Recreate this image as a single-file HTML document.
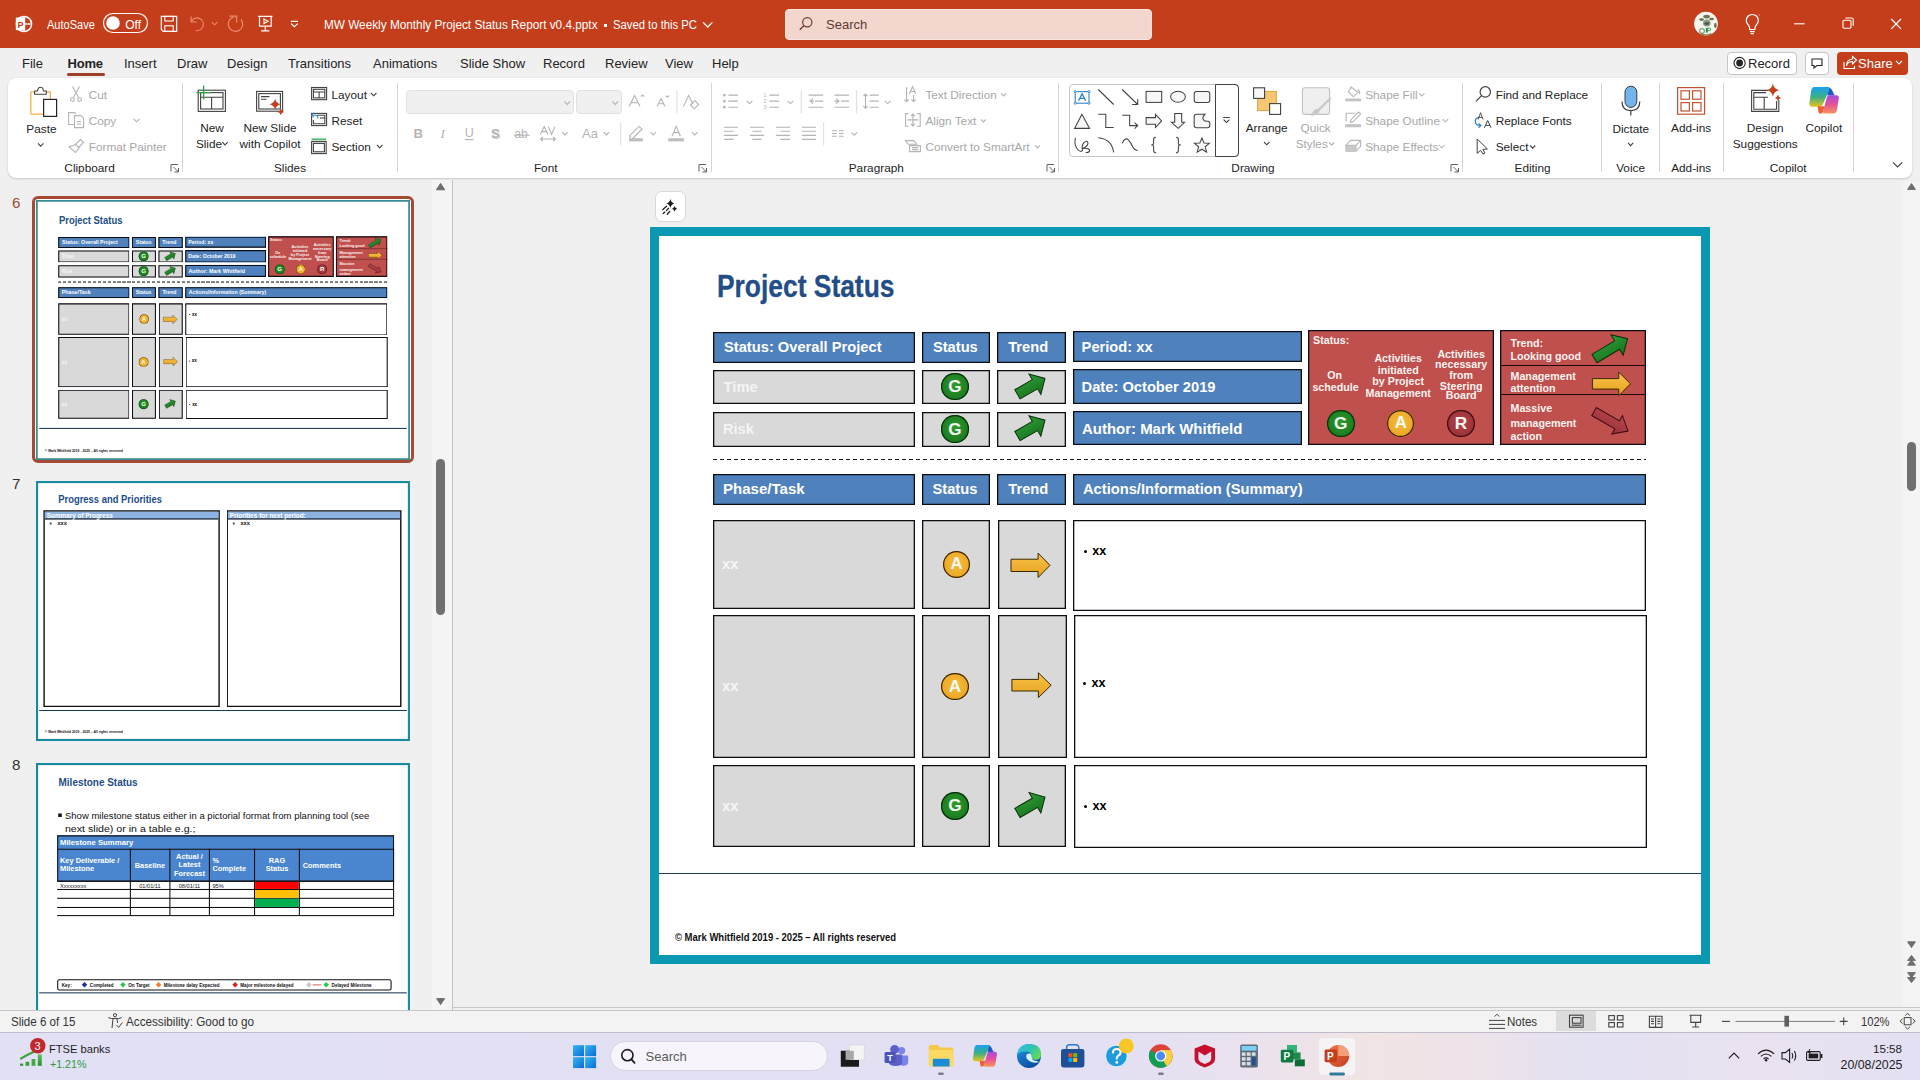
<!DOCTYPE html>
<html><head><meta charset="utf-8"><title>PowerPoint</title>
<style>
*{box-sizing:border-box;margin:0;padding:0}
html,body{width:1920px;height:1080px;overflow:hidden;background:#F0F0F0;font-family:"Liberation Sans",sans-serif;color:#242424}
.a{position:absolute}
.t{position:absolute;white-space:nowrap;line-height:1}
svg{position:absolute;overflow:visible}

</style></head><body>
<!-- TITLE BAR -->
<div class="a" style="left:0;top:0;width:1920px;height:48px;background:#C43E1C"></div>
<svg style="left:0;top:0" width="340" height="48" viewBox="0 0 340 48">
  <!-- PPT logo -->
  <circle cx="24" cy="24" r="7.6" fill="none" stroke="#fff" stroke-width="1.5"/>
  <line x1="24" y1="16.5" x2="24" y2="31.5" stroke="#fff" stroke-width="1.3"/>
  <line x1="24" y1="24" x2="31.5" y2="24" stroke="#fff" stroke-width="1.3"/>
  <rect x="15.8" y="17.6" width="9.4" height="12.6" rx="1" fill="#fff"/>
  <text x="17.6" y="27.6" font-family="Liberation Sans" font-weight="bold" font-size="9" fill="#C43E1C">P</text>
  <!-- toggle -->
  <rect x="103.5" y="13.5" width="44" height="19" rx="9.5" fill="none" stroke="#fff" stroke-width="1.2"/>
  <circle cx="113" cy="23" r="6.8" fill="#fff"/>
  <!-- save -->
  <path d="M161.3 16.4 H176.7 V31.4 H163.2 L161.3 29.5 Z" fill="none" stroke="#fff" stroke-width="1.2"/>
  <rect x="164.8" y="16.4" width="8.4" height="4.6" fill="none" stroke="#fff" stroke-width="1.1"/>
  <rect x="164.8" y="25.8" width="8.4" height="5.6" fill="none" stroke="#fff" stroke-width="1.1"/>
  <!-- undo -->
  <path d="M191.5 21.2 A6.3 6.3 0 1 1 196.5 30.5 L196 31" fill="none" stroke="#EC8A70" stroke-width="1.2"/>
  <path d="M191.2 16.5 V22 H196.5" fill="none" stroke="#EC8A70" stroke-width="1.2"/>
  <path d="M211.8 22.2 L214.6 24.8 L217.4 22.2" fill="none" stroke="#EC8A70" stroke-width="1.1"/>
  <!-- redo -->
  <path d="M241 19.5 A7.2 7.2 0 1 1 233.5 17.2" fill="none" stroke="#EC8A70" stroke-width="1.2"/>
  <path d="M229.5 16.2 H236.6 V22.5" fill="none" stroke="#EC8A70" stroke-width="1.2" transform="rotate(0)"/>
  <!-- present -->
  <path d="M258.2 16.4 H272.5 M259.5 16.4 V26.2 H271.2 V16.4 M265.3 26.2 V30.6 M261.2 30.8 H269.4" fill="none" stroke="#fff" stroke-width="1.2"/>
  <path d="M264 19 L268 21.3 L264 23.6 Z" fill="none" stroke="#fff" stroke-width="1.1"/>
  <!-- customize -->
  <path d="M290.8 21.3 H298 M291 23.6 L294.4 26.8 L297.8 23.6" fill="none" stroke="#fff" stroke-width="1.2"/>
</svg>
<div class="t" style="left:47.2px;top:19.3px;font-size:12px;color:#fff;transform:scaleX(0.92);transform-origin:0 0">AutoSave</div>
<div class="t" style="left:125.2px;top:19.3px;font-size:12px;color:#fff">Off</div>
<div class="t" style="left:324.2px;top:19.3px;font-size:12px;color:#fff;transform:scaleX(0.982);transform-origin:0 0">MW Weekly Monthly Project Status Report v0.4.pptx</div><div class="a" style="left:604px;top:24.3px;width:2.8px;height:2.8px;background:#fff"></div><div class="t" style="left:613.2px;top:19.3px;font-size:12px;color:#fff;transform:scaleX(0.94);transform-origin:0 0">Saved to this PC</div>
<svg style="left:702px;top:19px" width="16" height="12"><path d="M1.2 3.4 L5.8 8 L10.4 3.4" fill="none" stroke="#fff" stroke-width="1.3"/></svg>
<!-- search -->
<div class="a" style="left:784.5px;top:8.5px;width:367px;height:31px;background:#F3D7CF;border:1px solid #F7E6E1;border-radius:4px"></div>
<svg style="left:796px;top:14px" width="20" height="20" viewBox="0 0 20 20"><circle cx="11.3" cy="8.2" r="4.6" fill="none" stroke="#6B3A2E" stroke-width="1.2"/><line x1="8" y1="11.5" x2="3.8" y2="15.8" stroke="#6B3A2E" stroke-width="1.3"/></svg>
<div class="t" style="left:826px;top:18px;font-size:13px;color:#5E3A31">Search</div>
<!-- right -->
<svg style="left:0;top:0" width="1" height="1">
<circle cx="1706" cy="23.7" r="11.9" fill="#F6F4EE"/>
<ellipse cx="1706.6" cy="16.6" rx="3.4" ry="1.8" fill="#6F7550"/>
<ellipse cx="1701.6" cy="19.6" rx="2.4" ry="1.3" fill="#6A7050"/><ellipse cx="1711.6" cy="19" rx="2.4" ry="1.3" fill="#6A7050"/>
<ellipse cx="1706.8" cy="23" rx="3.8" ry="3.6" fill="#8A9A88"/>
<ellipse cx="1706.8" cy="23.6" rx="2.6" ry="1.4" fill="#3F5A48"/>
<ellipse cx="1715.4" cy="25.4" rx="1.3" ry="2.6" fill="#6E7048"/>
<circle cx="1702" cy="31" r="2.4" fill="none" stroke="#7FA08A" stroke-width="1.2"/>
<rect x="1705.8" y="28" width="2" height="4.6" fill="#2B8A45"/><path d="M1707.4 28.2 H1709.4 Q1710.6 28.2 1710.6 29.4 Q1710.6 30.6 1709.4 30.6 H1707.6" fill="none" stroke="#2B8A45" stroke-width="1"/>
<path d="M1700.6 33.6 Q1706 36.6 1711.4 33.6" fill="none" stroke="#8A7A40" stroke-width="1.2"/>
</svg>
<svg style="left:1740px;top:10px" width="26" height="28" viewBox="0 0 26 28"><path d="M12.3 4.5 C8.6 4.5 6.3 7.3 6.3 10.4 C6.3 13 8 14.4 9 16 C9.6 17 9.7 18 9.7 19.5 H14.9 C14.9 18 15 17 15.6 16 C16.6 14.4 18.3 13 18.3 10.4 C18.3 7.3 16 4.5 12.3 4.5 Z" fill="none" stroke="#fff" stroke-width="1.2"/><path d="M9.9 21.6 H14.7 M10.6 23.7 H14" stroke="#fff" stroke-width="1.2"/><circle cx="19" cy="5" r="1.3" fill="#D9584A"/></svg>
<svg style="left:1790px;top:14px" width="120" height="20" viewBox="0 0 120 20">
  <line x1="4" y1="9.8" x2="14.6" y2="9.8" stroke="#fff" stroke-width="1.1"/>
  <rect x="53" y="6.2" width="8" height="8" rx="1.2" fill="none" stroke="#fff" stroke-width="1.1"/>
  <path d="M55.4 4 H61.6 Q63.2 4 63.2 5.6 V11.8" fill="none" stroke="#fff" stroke-width="1.1"/>
  <path d="M101.2 5 L111 14.8 M111 5 L101.2 14.8" stroke="#fff" stroke-width="1.2"/>
</svg>
<!-- TABS -->
<div class="t" style="left:22px;top:57px;font-size:13px;color:#242424">File</div>
<div class="t" style="left:67.5px;top:57px;font-size:13px;color:#242424;font-weight:bold;letter-spacing:-0.2px">Home</div>
<div class="a" style="left:67px;top:73px;width:37.5px;height:3px;border-radius:1.5px;background:#9E3F28"></div>
<div class="t" style="left:124px;top:57px;font-size:13px">Insert</div>
<div class="t" style="left:177px;top:57px;font-size:13px">Draw</div>
<div class="t" style="left:227px;top:57px;font-size:13px">Design</div>
<div class="t" style="left:288px;top:57px;font-size:13px">Transitions</div>
<div class="t" style="left:373px;top:57px;font-size:13px">Animations</div>
<div class="t" style="left:460px;top:57px;font-size:13px">Slide Show</div>
<div class="t" style="left:543px;top:57px;font-size:13px">Record</div>
<div class="t" style="left:605px;top:57px;font-size:13px">Review</div>
<div class="t" style="left:665px;top:57px;font-size:13px">View</div>
<div class="t" style="left:712px;top:57px;font-size:13px">Help</div>
<!-- record / comments / share -->
<div class="a" style="left:1727px;top:51.5px;width:69.5px;height:23px;border:1px solid #C6C6C6;border-radius:4px;background:#fff"></div>
<svg style="left:1732px;top:55px" width="16" height="16"><circle cx="7.6" cy="8" r="5.6" fill="none" stroke="#242424" stroke-width="1.1"/><circle cx="7.6" cy="8" r="3.4" fill="#242424"/></svg>
<div class="t" style="left:1748px;top:57px;font-size:13px">Record</div>
<div class="a" style="left:1805px;top:51.5px;width:24px;height:23px;border:1px solid #C6C6C6;border-radius:4px;background:#fff"></div>
<svg style="left:1809px;top:55px" width="16" height="16"><path d="M3 4 H13 V10.5 H8 L5 13 V10.5 H3 Z" fill="none" stroke="#242424" stroke-width="1.1"/></svg>
<div class="a" style="left:1837px;top:51.5px;width:71px;height:23px;border-radius:4px;background:#C43E1C"></div>
<svg style="left:1841px;top:55px" width="20" height="16"><path d="M3 7 V13.5 H13.5 V11" fill="none" stroke="#fff" stroke-width="1.1"/><path d="M5.5 11 Q6.5 6.5 11.5 6.5 V9 L15.5 5 L11.5 1.5 V4 Q5.5 4.5 5.5 11 Z" fill="none" stroke="#fff" stroke-width="1.1"/></svg>
<div class="t" style="left:1858px;top:57px;font-size:13px;color:#fff">Share</div>
<svg style="left:1894px;top:58px" width="12" height="10"><path d="M2 3 L5 6 L8 3" fill="none" stroke="#fff" stroke-width="1.1"/></svg>
<!-- RIBBON -->
<div class="a" style="left:8px;top:78px;width:1904px;height:100px;background:#fff;border-radius:8px;box-shadow:0 1px 2px rgba(0,0,0,0.16),0 0 1px rgba(0,0,0,0.10)"></div>
<div class="a" style="left:182.0px;top:83px;width:1px;height:89px;background:#D6D6D6"></div>
<div class="a" style="left:397.0px;top:83px;width:1px;height:89px;background:#D6D6D6"></div>
<div class="a" style="left:710.5px;top:83px;width:1px;height:89px;background:#D6D6D6"></div>
<div class="a" style="left:1058.0px;top:83px;width:1px;height:89px;background:#D6D6D6"></div>
<div class="a" style="left:1462.0px;top:83px;width:1px;height:89px;background:#D6D6D6"></div>
<div class="a" style="left:1601.0px;top:83px;width:1px;height:89px;background:#D6D6D6"></div>
<div class="a" style="left:1659.0px;top:83px;width:1px;height:89px;background:#D6D6D6"></div>
<div class="a" style="left:1722.5px;top:83px;width:1px;height:89px;background:#D6D6D6"></div>
<div class="a" style="left:1853.0px;top:83px;width:1px;height:89px;background:#D6D6D6"></div>
<div class="t" style="left:-110.40px;width:400px;text-align:center;top:163.14px;font-size:11.8px;color:#242424;">Clipboard</div>
<div class="t" style="left:90.00px;width:400px;text-align:center;top:163.14px;font-size:11.8px;color:#242424;">Slides</div>
<div class="t" style="left:345.70px;width:400px;text-align:center;top:163.14px;font-size:11.8px;color:#242424;">Font</div>
<div class="t" style="left:676.30px;width:400px;text-align:center;top:163.14px;font-size:11.8px;color:#242424;">Paragraph</div>
<div class="t" style="left:1053.00px;width:400px;text-align:center;top:163.14px;font-size:11.8px;color:#242424;">Drawing</div>
<div class="t" style="left:1332.60px;width:400px;text-align:center;top:163.14px;font-size:11.8px;color:#242424;">Editing</div>
<div class="t" style="left:1430.60px;width:400px;text-align:center;top:163.14px;font-size:11.8px;color:#242424;">Voice</div>
<div class="t" style="left:1491.20px;width:400px;text-align:center;top:163.14px;font-size:11.8px;color:#242424;">Add-ins</div>
<div class="t" style="left:1588.20px;width:400px;text-align:center;top:163.14px;font-size:11.8px;color:#242424;">Copilot</div>
<svg style="left:0;top:0" width="1" height="1"><path d="M171 171.5 V164.5 H178" fill="none" stroke="#616161" stroke-width="1"/><path d="M173.5 167.0 L178.5 172.0 M174.5 172.0 H178.5 V168.0" fill="none" stroke="#616161" stroke-width="1"/></svg>
<svg style="left:0;top:0" width="1" height="1"><path d="M699 171.5 V164.5 H706" fill="none" stroke="#616161" stroke-width="1"/><path d="M701.5 167.0 L706.5 172.0 M702.5 172.0 H706.5 V168.0" fill="none" stroke="#616161" stroke-width="1"/></svg>
<svg style="left:0;top:0" width="1" height="1"><path d="M1047 171.5 V164.5 H1054" fill="none" stroke="#616161" stroke-width="1"/><path d="M1049.5 167.0 L1054.5 172.0 M1050.5 172.0 H1054.5 V168.0" fill="none" stroke="#616161" stroke-width="1"/></svg>
<svg style="left:0;top:0" width="1" height="1"><path d="M1451 171.5 V164.5 H1458" fill="none" stroke="#616161" stroke-width="1"/><path d="M1453.5 167.0 L1458.5 172.0 M1454.5 172.0 H1458.5 V168.0" fill="none" stroke="#616161" stroke-width="1"/></svg>
<div class="t" style="left:-158.60px;width:400px;text-align:center;top:123.94px;font-size:11.8px;color:#242424;">Paste</div>
<svg style="left:0;top:0" width="1" height="1"><path d="M38 143.3 L40.7 146.10000000000002 L43.4 143.3" fill="none" stroke="#424242" stroke-width="1.1"/></svg>
<svg style="left:0;top:0" width="1" height="1">
<path d="M30.8 91.8 H50.4 V99 M43 114.2 H30.8 Z" fill="#F9F9F9" stroke="#F2B24B" stroke-width="1.3"/>
<path d="M30.8 91.8 V114.2" stroke="#F2B24B" stroke-width="1.3"/>
<path d="M34.6 94.2 V91 H37.5 Q38 87.2 40.5 87.2 Q43 87.2 43.5 91 H46.3 V94.2 Z" fill="#fff" stroke="#424242" stroke-width="1.1"/>
<rect x="43.6" y="99.4" width="13" height="17" fill="#fff" stroke="#242424" stroke-width="1.2"/>
</svg>
<div class="t" style="left:88.70px;top:89.94px;font-size:11.8px;color:#A8A8A8;">Cut</div>
<div class="t" style="left:88.70px;top:115.74px;font-size:11.8px;color:#A8A8A8;">Copy</div>
<svg style="left:0;top:0" width="1" height="1"><path d="M133.8 119 L136.60000000000002 121.8 L139.4 119" fill="none" stroke="#B4B4B4" stroke-width="1.1"/></svg>
<div class="t" style="left:88.70px;top:141.74px;font-size:11.8px;color:#A8A8A8;">Format Painter</div>
<svg style="left:0;top:0" width="1" height="1">
<g fill="none" stroke="#B4B4B4" stroke-width="1.1">
<path d="M72.5 86.5 L78.6 97.5 M79.5 86.5 L73.4 97.5"/><circle cx="72.4" cy="99.6" r="1.9"/><circle cx="79.6" cy="99.6" r="1.9"/>
<path d="M74 124.5 H68.6 V112.6 H74.6 L76 114"/><path d="M74.5 115.6 H81 L83.6 118.2 V127.6 H74.5 Z"/><path d="M76.8 121.5 H81 M76.8 124 H81"/>
<path d="M80.5 139.5 L83.6 142.5 L78.6 147.5 L75.5 144.5 Z"/><path d="M75.5 144.5 L69 147 L75.6 152.5 L79.5 147.2"/>
</g></svg>
<div class="t" style="left:12.00px;width:400px;text-align:center;top:123.04px;font-size:11.8px;color:#242424;">New</div>
<div class="t" style="left:9.00px;width:400px;text-align:center;top:138.84px;font-size:11.8px;color:#242424;">Slide</div>
<svg style="left:0;top:0" width="1" height="1"><path d="M222.3 142.2 L225.0 145.0 L227.70000000000002 142.2" fill="none" stroke="#424242" stroke-width="1.1"/></svg>
<div class="t" style="left:70.00px;width:400px;text-align:center;top:123.04px;font-size:11.8px;color:#242424;">New Slide</div>
<div class="t" style="left:70.00px;width:400px;text-align:center;top:138.84px;font-size:11.8px;color:#242424;">with Copilot</div>
<div class="t" style="left:331.50px;top:90.04px;font-size:11.8px;color:#242424;">Layout</div>
<svg style="left:0;top:0" width="1" height="1"><path d="M371 93 L373.7 95.8 L376.4 93" fill="none" stroke="#424242" stroke-width="1.1"/></svg>
<div class="t" style="left:331.50px;top:115.84px;font-size:11.8px;color:#242424;">Reset</div>
<div class="t" style="left:331.50px;top:141.84px;font-size:11.8px;color:#242424;">Section</div>
<svg style="left:0;top:0" width="1" height="1"><path d="M377 145 L379.7 147.8 L382.4 145" fill="none" stroke="#424242" stroke-width="1.1"/></svg>
<svg style="left:0;top:0" width="1" height="1">
<g fill="none" stroke="#424242" stroke-width="1.1">
<rect x="198.2" y="90.2" width="27.2" height="21.2"/><rect x="200.6" y="92.6" width="22.4" height="16.4"/>
<path d="M200.6 97.3 H223 M211.6 97.3 V109"/>
</g>
<path d="M203.6 85.5 V99.6 M196.5 92.6 H210.7" stroke="#2E9E45" stroke-width="1.3"/>
<g fill="none" stroke="#424242" stroke-width="1.1">
<rect x="256.6" y="91.4" width="26" height="19.8"/><rect x="258.8" y="93.6" width="21.6" height="15.4"/>
<path d="M261 96.6 H269.5 M261 99.2 H266.5"/>
</g>
<path d="M275.1 98.6 Q276 103.4 280.6 104.3 Q276 105.2 275.1 110 Q274.2 105.2 269.6 104.3 Q274.2 103.4 275.1 98.6 Z" fill="#C43E1C"/>
<path d="M280.8 108.6 Q281.3 111.4 284 111.9 Q281.3 112.4 280.8 115.2 Q280.3 112.4 277.6 111.9 Q280.3 111.4 280.8 108.6 Z" fill="#C43E1C"/>
<g fill="none" stroke="#424242" stroke-width="1.1">
<rect x="311.6" y="87.5" width="15" height="12.2"/><rect x="313.4" y="89.3" width="11.4" height="8.6"/><path d="M313.4 92 H324.8 M319.1 92 V97.9"/>
<rect x="311.6" y="113.4" width="15" height="12.2"/><path d="M317 115.2 H324.8 V123.8 H313.4 V120"/><path d="M320 118 H324.8"/>
<rect x="311.6" y="141.6" width="14.6" height="12"/><rect x="313.4" y="143.4" width="11" height="8.4"/>
</g>
<path d="M318 118.5 Q318 115 314.5 115 H312" fill="none" stroke="#3A87C9" stroke-width="1.1"/><path d="M314 112.8 L311.6 115 L314 117.2" fill="none" stroke="#3A87C9" stroke-width="1.1"/>
<rect x="311.6" y="138.4" width="14.6" height="2" fill="#5DB56F"/>
</svg>
<div class="a" style="left:406.2px;top:90px;width:167.4px;height:23.5px;background:#F0F0F0;border:1px solid #E2E2E2;border-radius:4px"></div>
<div class="a" style="left:576.4px;top:90px;width:45.4px;height:23.5px;background:#F0F0F0;border:1px solid #E2E2E2;border-radius:4px"></div>
<svg style="left:0;top:0" width="1" height="1"><path d="M564.2 101.4 L567.2 104.4 L570.2 101.4" fill="none" stroke="#B4B4B4" stroke-width="1.1"/></svg>
<svg style="left:0;top:0" width="1" height="1"><path d="M612.2 101.4 L615.2 104.4 L618.2 101.4" fill="none" stroke="#B4B4B4" stroke-width="1.1"/></svg>
<svg style="left:0;top:0" width="1" height="1">
<g fill="none" stroke="#B4B4B4" stroke-width="1.1">
<path d="M629.2 106.6 L634.6 95.6 L640 106.6 M631 102.8 H638.2"/><path d="M641 96.6 L642.6 95 L644.2 96.6"/>
<path d="M657 106.6 L661 98.6 L665 106.6 M658.4 103.8 H663.6"/><path d="M665.6 95.6 L667.4 97.2 L669.2 95.6"/>
<path d="M683.5 106.6 L688.5 95.4 L693 104"/><path d="M690.5 105 L694.8 100.6 L698.6 104.4 L694.3 108.8 Z"/>
<path d="M677 90.4 V113.2" stroke="#E0E0E0"/>
<path d="M620.7 122.4 V145.4" stroke="#E0E0E0"/>
<path d="M540.4 134.3 L544.2 126.6 L548 134.3 M541.8 131.6 H546.6 M548.2 126.6 L551.6 134.3 L555 126.6"/>
<path d="M540.6 139 H555.4 M542.8 137 L540.6 139 L542.8 141 M553.2 137 L555.4 139 L553.2 141"/>
<path d="M464.8 139.6 H473.6"/>
<path d="M514 135.2 H529.6"/>
<path d="M629.2 136.2 L639.2 126.4 L642 129.2 L632 139"/><path d="M629 138.2 L631 136.2"/>
<path d="M672 136.2 L676.2 126.4 L680.4 136.2 M673.6 132.6 H678.8"/>
</g>
<rect x="629" y="138.2" width="13.8" height="3.2" fill="#BDBDBD"/>
<rect x="668.3" y="138.2" width="15.5" height="3.2" fill="#BDBDBD"/>
</svg>
<div class="t" style="left:413.6px;top:126.9px;font-size:13px;font-weight:bold;color:#B4B4B4">B</div>
<div class="t" style="left:440.6px;top:126.9px;font-size:13px;font-style:italic;color:#B4B4B4;font-family:'Liberation Serif',serif">I</div>
<div class="t" style="left:464.8px;top:126.9px;font-size:12.5px;color:#B4B4B4">U</div>
<div class="t" style="left:491px;top:126.9px;font-size:13px;font-weight:bold;color:#B4B4B4;text-shadow:1px 1px 1px #D0D0D0">S</div>
<div class="t" style="left:514.4px;top:128.4px;font-size:12px;color:#B4B4B4">ab</div>
<div class="t" style="left:582px;top:127.2px;font-size:13px;color:#B4B4B4">Aa</div>
<svg style="left:0;top:0" width="1" height="1"><path d="M562 132.2 L564.8 135.0 L567.6 132.2" fill="none" stroke="#B4B4B4" stroke-width="1.1"/></svg>
<svg style="left:0;top:0" width="1" height="1"><path d="M603.6 132.2 L606.4 135.0 L609.2 132.2" fill="none" stroke="#B4B4B4" stroke-width="1.1"/></svg>
<svg style="left:0;top:0" width="1" height="1"><path d="M650.4 132.2 L653.1999999999999 135.0 L656.0 132.2" fill="none" stroke="#B4B4B4" stroke-width="1.1"/></svg>
<svg style="left:0;top:0" width="1" height="1"><path d="M692 132.2 L694.8 135.0 L697.6 132.2" fill="none" stroke="#B4B4B4" stroke-width="1.1"/></svg>
<svg style="left:0;top:0" width="1" height="1">
<g fill="#B4B4B4">
<rect x="723.2" y="94" width="2.4" height="2.4"/><rect x="723.2" y="100" width="2.4" height="2.4"/><rect x="723.2" y="106" width="2.4" height="2.4"/>
</g>
<g fill="none" stroke="#B4B4B4" stroke-width="1.1">
<path d="M728.4 95.1 H738 M728.4 101.1 H738 M728.4 107.2 H738"/>
<path d="M769.4 95.1 H779 M769.4 101.1 H779 M769.4 107.2 H779"/>
<path d="M808.6 95.1 H823.2 M815 101.1 H823.2 M808.6 107.2 H823.2 M813 98.6 L810 101.1 L813 103.6 M810 101.1 H814"/>
<path d="M834.5 95.1 H849 M841 101.1 H849 M834.5 107.2 H849 M836 98.6 L839 101.1 L836 103.6 M834.5 101.1 H839"/>
<path d="M869.7 95.1 H878.8 M869.7 101.1 H878.8 M869.7 107.2 H878.8 M865.5 94 V108.4 M863.4 96.2 L865.5 94 L867.6 96.2 M863.4 106.2 L865.5 108.4 L867.6 106.2"/>
<path d="M801.3 90.2 V113.4 M856.6 90.2 V113.4 M823.6 122.1 V145.8" stroke="#E0E0E0"/>
<path d="M723.8 127.2 H737.9 M723.8 131.2 H733.5 M723.8 135.4 H737.9 M723.8 139.4 H733.5"/>
<path d="M749.9 127.2 H764 M752.4 131.2 H761.5 M749.9 135.4 H764 M752.4 139.4 H761.5"/>
<path d="M775.8 127.2 H790 M780.4 131.2 H790 M775.8 135.4 H790 M780.4 139.4 H790"/>
<path d="M801.9 127.2 H815.9 M801.9 131.2 H815.9 M801.9 135.4 H815.9 M801.9 139.4 H815.9"/>
<path d="M832 130.8 H836.6 M839 130.8 H843.6 M832 133.5 H836.6 M839 133.5 H843.6 M832 136.2 H836.6 M839 136.2 H843.6"/>
<path d="M906.6 87 V101.6 M904.4 99.4 L906.6 101.6 L908.8 99.4 M913.6 95 V101.6 M911.4 99.4 L913.6 101.6 L915.8 99.4"/>
<path d="M909.4 94 L912.6 86.6 L915.8 94 M910.5 91.5 H914.7"/>
<path d="M908.6 113.6 H905.6 V126.2 H908.6 M917.2 113.6 H920.2 V126.2 H917.2 M912.9 114 V126 M910.8 116.2 L912.9 114 L915 116.2 M910.8 123.8 L912.9 126 L915 123.8 M907.5 119.9 H918.5"/>
<path d="M905.6 140.6 H914 L916.6 144.2 H908.2 Z M909.6 145.6 H920.4 V151.6 H909.6 Z M912 147.6 H918.4 M912 149.6 H918.4"/>
</g></svg>
<svg style="left:0;top:0" width="1" height="1"><path d="M746.6 100.8 L749.5 103.6 L752.4 100.8" fill="none" stroke="#B4B4B4" stroke-width="1.1"/></svg>
<svg style="left:0;top:0" width="1" height="1"><path d="M787.6 100.8 L790.5 103.6 L793.4 100.8" fill="none" stroke="#B4B4B4" stroke-width="1.1"/></svg>
<svg style="left:0;top:0" width="1" height="1"><path d="M884.8 100.8 L887.6999999999999 103.6 L890.5999999999999 100.8" fill="none" stroke="#B4B4B4" stroke-width="1.1"/></svg>
<svg style="left:0;top:0" width="1" height="1"><path d="M851.4 132.4 L854.3 135.20000000000002 L857.1999999999999 132.4" fill="none" stroke="#B4B4B4" stroke-width="1.1"/></svg>
<div class="t" style="left:763.6px;top:92.2px;font-size:5.5px;line-height:6px;color:#B4B4B4;white-space:pre">1
2
3</div>
<div class="t" style="left:925.40px;top:89.94px;font-size:11.8px;color:#A8A8A8;">Text Direction</div>
<svg style="left:0;top:0" width="1" height="1"><path d="M1001 93.4 L1003.5 96.0 L1006 93.4" fill="none" stroke="#B4B4B4" stroke-width="1.1"/></svg>
<div class="t" style="left:925.40px;top:116.04px;font-size:11.8px;color:#A8A8A8;">Align Text</div>
<svg style="left:0;top:0" width="1" height="1"><path d="M981 119.4 L983.5 122.0 L986 119.4" fill="none" stroke="#B4B4B4" stroke-width="1.1"/></svg>
<div class="t" style="left:925.40px;top:142.04px;font-size:11.8px;color:#A8A8A8;">Convert to SmartArt</div>
<svg style="left:0;top:0" width="1" height="1"><path d="M1035 145.4 L1037.5 148.0 L1040 145.4" fill="none" stroke="#B4B4B4" stroke-width="1.1"/></svg>
<div class="a" style="left:1068.6px;top:84.3px;width:170.4px;height:73.2px;border:1px solid #C6C6C6;border-radius:4px"></div>
<div class="a" style="left:1215px;top:84.3px;width:24px;height:73.2px;border:1px solid #424242;border-radius:0 4px 4px 0"></div>
<svg style="left:0;top:0" width="1" height="1">
<g fill="none" stroke="#424242" stroke-width="1.05">
<path d="M1098.3 89.5 L1113.7 104.5"/>
<path d="M1122.2 89.5 L1137.7 104.5 M1137.7 99 V104.5 H1132.2"/>
<rect x="1146.1" y="91.4" width="15.6" height="11" fill="#F7F7F7"/>
<ellipse cx="1178" cy="96.8" rx="7.4" ry="5.5" fill="#F7F7F7"/>
<rect x="1194.2" y="91.4" width="15.6" height="11" rx="2.4" fill="#F7F7F7"/>
<path d="M1081.9 114.3 L1074.6 128.4 H1089.6 Z" fill="#F7F7F7"/>
<path d="M1098.3 114.3 H1105.8 V127.5 H1113.7"/>
<path d="M1122.2 115.3 H1129.7 V125.6 H1137.7 M1134.6 122.6 L1137.7 125.6 L1134.6 128.6"/>
<path d="M1146.1 117.6 H1155.5 V114.3 L1161.6 120.9 L1155.5 127.5 V124.2 H1146.1 Z" fill="#F7F7F7"/>
<path d="M1174.7 113.4 H1181.7 V122.3 H1184.5 L1178.2 128.4 L1171.4 122.3 H1174.7 Z" fill="#F7F7F7"/>
<path d="M1196.6 114.3 H1205 Q1202.2 116.6 1203 119 Q1204 121.6 1207.6 121.2 Q1209.8 121.2 1209.8 123.4 V125.6 Q1209.8 127.7 1207.6 127.7 H1196.4 Q1194.2 127.7 1194.2 125.5 V116.5 Q1194.2 114.3 1196.6 114.3 Z" fill="#F7F7F7"/>
<path d="M1075.4 137.8 Q1073.6 146 1078.6 150.4 Q1082 152.6 1082.6 149.8 Q1081 146 1084 142.6 Q1087.6 139.4 1088 143.4 Q1087.6 147 1081.6 148.6 Q1088.6 147.6 1089.6 150.2 Q1089.8 152.4 1085.6 152.8"/>
<path d="M1098.3 137.8 Q1111.6 139 1113.7 152.3"/>
<path d="M1122.2 143.4 Q1124.8 136.8 1128.4 139.8 Q1131 142.6 1133 147.4 Q1135.2 150.8 1137.7 150.4"/>
<path d="M1155.9 137.3 Q1153.6 137.3 1153.6 140 V143.6 Q1153.6 145 1151.2 145 Q1153.6 145 1153.6 146.6 V150.2 Q1153.6 152.8 1155.9 152.8"/>
<path d="M1176.1 137.3 Q1178.4 137.3 1178.4 140 V143.6 Q1178.4 145 1180.8 145 Q1178.4 145 1178.4 146.6 V150.2 Q1178.4 152.8 1176.1 152.8"/>
<path d="M1201.9 138 L1204 143 L1209.4 143.3 L1205.2 146.8 L1206.6 152.2 L1201.9 149.2 L1197.2 152.2 L1198.6 146.8 L1194.4 143.3 L1199.8 143 Z" fill="#F7F7F7"/>
<path d="M1223.2 117.4 H1229.8 M1223.6 119.6 L1226.5 122.4 L1229.4 119.6"/>
</g>
<g fill="none" stroke="#2F86C6" stroke-width="1.1">
<rect x="1075.2" y="91.6" width="13.8" height="11.6"/>
</g>
<g fill="#fff" stroke="#2F86C6" stroke-width="0.9">
<circle cx="1075.2" cy="91.6" r="1.1"/><circle cx="1089" cy="91.6" r="1.1"/><circle cx="1075.2" cy="103.2" r="1.1"/><circle cx="1089" cy="103.2" r="1.1"/>
</g>
<path d="M1078.6 100.8 L1082.1 93.8 L1085.6 100.8 M1079.8 98.4 H1084.4" fill="none" stroke="#2F86C6" stroke-width="1.4"/>
<!-- arrange -->
<rect x="1257.6" y="91.4" width="18.8" height="19.2" fill="#F6C770" stroke="#E0A443" stroke-width="1"/>
<rect x="1253.6" y="87.8" width="11" height="10.6" fill="#F7F7F7" stroke="#424242" stroke-width="1.1"/>
<rect x="1269.6" y="103.6" width="11" height="10.8" fill="#fff" stroke="#424242" stroke-width="1.1"/>
<!-- quick styles -->
<rect x="1302.4" y="87.8" width="27.2" height="26.6" rx="2.4" fill="#EFEFEF" stroke="#C2C2C2" stroke-width="1.1"/>
<path d="M1330.6 98 L1318 110.6" stroke="#C8C8C8" stroke-width="2.2"/>
<path d="M1317.2 108.8 Q1313 109.6 1311 116 Q1317 115.4 1319.6 111.4 Z" fill="#C8C8C8"/>
<!-- shape fill -->
<g fill="none" stroke="#B8B8B8" stroke-width="1.1">
<path d="M1351.6 87.2 L1348.2 91.6 L1353.4 96.8 L1358 92.4 Z M1350.8 88.6 V86.4 M1357.6 89.6 Q1360 90.6 1359.6 94"/>
<path d="M1346.2 121.6 V113.2 H1355 M1351 119.6 L1358.6 112 L1360.6 114 L1353 121.6 L1350.6 122.4 Z"/>
<path d="M1345.8 145.4 L1350.6 140.4 H1360.6 V146.4 L1356 151.2 H1346 Z M1345.8 145.4 H1356 L1360.6 140.4 M1356 145.4 V151.2"/>
</g>
<rect x="1345.2" y="98.5" width="15.8" height="2.9" fill="#C4C4C4"/>
<rect x="1345.2" y="124.2" width="15.8" height="3.1" fill="#C4C4C4"/>
<path d="M1346 145.6 H1356 V151.2 H1346 Z" fill="#C8C8C8"/>
<!-- find -->
<g fill="none" stroke="#424242" stroke-width="1.2">
<circle cx="1485.3" cy="91.9" r="5.2"/><path d="M1481.6 95.7 L1476 101.3"/>
<path d="M1477.2 139 V153.4 L1480.6 150.4 L1483 154 L1485 153 L1482.8 149.4 L1487.4 149 Z" stroke-width="1"/>
</g>
<path d="M1478.8 117.2 Q1474.6 118.4 1475.4 122.4 Q1476 125.6 1480.6 125.6" fill="none" stroke="#2F86C6" stroke-width="1.2"/>
<path d="M1478.6 123.4 L1481 125.6 L1478.6 127.8" fill="none" stroke="#2F86C6" stroke-width="1.2"/>
<path d="M1478.2 119.5 L1480.6 112.7 L1483 119.5 M1478.9 117.4 H1482.3" fill="none" stroke="#424242" stroke-width="0.9"/>
<path d="M1484.4 127.8 L1487.7 120.5 L1491 127.8 M1485.4 125.4 H1490" fill="none" stroke="#424242" stroke-width="1"/>
<!-- mic -->
<rect x="1625" y="86.2" width="11.8" height="21.2" rx="5.9" fill="#72B4EE" stroke="#3C3C3C" stroke-width="1"/>
<path d="M1622 101.6 Q1622 110.6 1630.8 110.6 Q1639.8 110.6 1639.8 101.6 M1630.8 110.6 V115.6" fill="none" stroke="#3C3C3C" stroke-width="1.2"/>
<!-- add-ins -->
<g fill="none" stroke="#C2542F" stroke-width="1.2">
<rect x="1677.6" y="87.6" width="27" height="26.6"/>
<rect x="1681" y="90.8" width="8.4" height="8.4"/><rect x="1692.6" y="90.8" width="8.4" height="8.4"/>
<rect x="1681" y="102.6" width="8.4" height="8.4"/><rect x="1692.6" y="102.6" width="8.4" height="8.4"/>
</g>
<!-- design suggestions -->
<g fill="none" stroke="#424242" stroke-width="1.1">
<path d="M1768 90.4 H1751.6 V111.4 H1778.8 V100"/><path d="M1766 92.6 H1753.8 V109.2 H1776.6 V101 M1753.8 97.3 H1768 M1764.2 97.3 V109.2"/>
</g>
<path d="M1772.9 83.6 Q1773.8 89.3 1779.2 90.2 Q1773.8 91.1 1772.9 96.8 Q1772 91.1 1766.6 90.2 Q1772 89.3 1772.9 83.6 Z" fill="#C43E1C"/>
<path d="M1778 94.6 Q1778.5 97.4 1781.2 97.9 Q1778.5 98.4 1778 101.2 Q1777.5 98.4 1774.8 97.9 Q1777.5 97.4 1778 94.6 Z" fill="#C43E1C"/>
<!-- collapse -->
<path d="M1893 162.4 L1897.6 167 L1902.2 162.4" fill="none" stroke="#424242" stroke-width="1.2"/>
<!-- copilot logo -->
<defs>
<linearGradient id="cpa" x1="0" y1="0" x2="1" y2="1"><stop offset="0" stop-color="#2B7DE9"/><stop offset="0.45" stop-color="#26B4A5"/><stop offset="1" stop-color="#F5C12E"/></linearGradient>
<linearGradient id="cpb" x1="0" y1="0" x2="1" y2="1"><stop offset="0" stop-color="#3D56E8"/><stop offset="0.5" stop-color="#C357E0"/><stop offset="1" stop-color="#F2645A"/></linearGradient>
</defs>
<defs>
<linearGradient id="cpl" x1="0" y1="0" x2="0" y2="1"><stop offset="0" stop-color="#17A2F2"/><stop offset="0.5" stop-color="#3BAF86"/><stop offset="1" stop-color="#E6C417"/></linearGradient>
<linearGradient id="cpr" x1="0" y1="0" x2="0" y2="1"><stop offset="0" stop-color="#A64BDF"/><stop offset="0.5" stop-color="#E65199"/><stop offset="1" stop-color="#F9955A"/></linearGradient>
</defs>
<path d="M1826 87 Q1830.6 87 1832 90 L1834.6 95.6 H1827.6 Z" fill="#2456CC"/>
<path d="M1814.2 87 H1827.6 Q1830.2 87 1829.4 89.6 L1822.8 104.6 Q1821.8 106.8 1819.2 106.8 H1812.2 Q1809.2 106.8 1809.4 103.6 L1811 91.6 Q1811.8 87 1814.2 87 Z" fill="url(#cpl)"/>
<path d="M1817.6 106.2 H1824.8 L1823 111.6 Q1822.2 113.8 1820.6 113.8 Q1818.8 113.8 1818.4 111.6 Z" fill="#EE5F35"/>
<path d="M1829 95.2 H1836 Q1839.2 95.2 1838.8 98.6 L1837 109.6 Q1836.4 113.6 1833.4 113.6 H1824.4 Q1822.2 113.6 1823 111.4 L1826.8 97.6 Q1827.4 95.2 1829 95.2 Z" fill="url(#cpr)"/>
</svg>
<div class="t" style="left:1066.70px;width:400px;text-align:center;top:122.64px;font-size:11.8px;color:#242424;">Arrange</div>
<svg style="left:0;top:0" width="1" height="1"><path d="M1264 142 L1266.7 144.8 L1269.4 142" fill="none" stroke="#424242" stroke-width="1.1"/></svg>
<div class="t" style="left:1115.70px;width:400px;text-align:center;top:122.94px;font-size:11.8px;color:#A8A8A8;">Quick</div>
<div class="t" style="left:1295.70px;top:138.64px;font-size:11.8px;color:#A8A8A8;">Styles</div>
<svg style="left:0;top:0" width="1" height="1"><path d="M1329.2 142.5 L1331.7 145.1 L1334.2 142.5" fill="none" stroke="#B4B4B4" stroke-width="1.1"/></svg>
<div class="t" style="left:1365.20px;top:90.04px;font-size:11.8px;color:#A8A8A8;">Shape Fill</div>
<svg style="left:0;top:0" width="1" height="1"><path d="M1419 93.4 L1421.75 96.0 L1424.5 93.4" fill="none" stroke="#B4B4B4" stroke-width="1.1"/></svg>
<div class="t" style="left:1365.20px;top:115.74px;font-size:11.8px;color:#A8A8A8;">Shape Outline</div>
<svg style="left:0;top:0" width="1" height="1"><path d="M1442.7 119.2 L1445.45 121.8 L1448.2 119.2" fill="none" stroke="#B4B4B4" stroke-width="1.1"/></svg>
<div class="t" style="left:1365.20px;top:141.84px;font-size:11.8px;color:#A8A8A8;">Shape Effects</div>
<svg style="left:0;top:0" width="1" height="1"><path d="M1438.9 145.2 L1441.65 147.79999999999998 L1444.4 145.2" fill="none" stroke="#B4B4B4" stroke-width="1.1"/></svg>
<div class="t" style="left:1495.70px;top:89.94px;font-size:11.8px;color:#242424;">Find and Replace</div>
<div class="t" style="left:1495.70px;top:115.64px;font-size:11.8px;color:#242424;">Replace Fonts</div>
<div class="t" style="left:1495.70px;top:141.74px;font-size:11.8px;color:#242424;">Select</div>
<svg style="left:0;top:0" width="1" height="1"><path d="M1530.1 145.5 L1532.6999999999998 148.1 L1535.3 145.5" fill="none" stroke="#424242" stroke-width="1.1"/></svg>
<div class="t" style="left:1430.80px;width:400px;text-align:center;top:123.89px;font-size:11.8px;color:#242424;">Dictate</div>
<svg style="left:0;top:0" width="1" height="1"><path d="M1628 142.9 L1630.6 145.70000000000002 L1633.2 142.9" fill="none" stroke="#424242" stroke-width="1.1"/></svg>
<div class="t" style="left:1491.10px;width:400px;text-align:center;top:122.94px;font-size:11.8px;color:#242424;">Add-ins</div>
<div class="t" style="left:1565.20px;width:400px;text-align:center;top:122.94px;font-size:11.8px;color:#242424;">Design</div>
<div class="t" style="left:1565.20px;width:400px;text-align:center;top:138.84px;font-size:11.8px;color:#242424;">Suggestions</div>
<div class="t" style="left:1623.90px;width:400px;text-align:center;top:122.94px;font-size:11.8px;color:#242424;">Copilot</div>
<!-- LEFT PANEL -->
<div class="a" style="left:432px;top:180px;width:20px;height:830px;background:#F4F4F4"></div>
<div class="a" style="left:452px;top:180px;width:1px;height:830px;background:#C4C4C4"></div>
<svg style="left:0;top:0" width="1" height="1">
<path d="M440.6 183.4 L444.8 189.8 H436.4 Z" fill="#6E6E6E" stroke="#6E6E6E" stroke-width="1" stroke-linejoin="round"/>
<path d="M440.6 1004.6 L444.6 998.6 H436.6 Z" fill="#6E6E6E" stroke="#6E6E6E" stroke-width="1" stroke-linejoin="round"/>
</svg>
<div class="a" style="left:436.1px;top:459px;width:8.8px;height:155.7px;border-radius:4.4px;background:#707070"></div>
<div class="t" style="left:12px;top:195.2px;font-size:15.2px;color:#A54A33">6</div>
<div class="t" style="left:12px;top:476.4px;font-size:15.2px;color:#333">7</div>
<div class="t" style="left:12px;top:757.4px;font-size:15.2px;color:#333">8</div>
<!-- MAIN AREA -->
<div class="a" style="left:1903px;top:181px;width:17px;height:826px;background:#F4F4F4"></div>
<svg style="left:0;top:0" width="1" height="1">
<g fill="#6E6E6E" stroke="#6E6E6E" stroke-width="1" stroke-linejoin="round">
<path d="M1911.5 183.6 L1915.4 189.4 H1907.6 Z"/>
<path d="M1911.5 947.6 L1915.4 941.8 H1907.6 Z"/>
<path d="M1911.5 955.4 L1915.4 960.4 H1907.6 Z"/><path d="M1911.5 960 L1915.4 965.2 H1907.6 Z"/>
<path d="M1911.5 982.6 L1915.4 977.6 H1907.6 Z"/><path d="M1911.5 977.8 L1915.4 972.6 H1907.6 Z"/>
</g></svg>
<div class="a" style="left:1907.1px;top:442px;width:8.8px;height:48.8px;border-radius:4.4px;background:#707070"></div>
<div class="a" style="left:453px;top:1007px;width:1467px;height:1px;background:#C8C8C8"></div>
<!-- magic button -->
<div class="a" style="left:654.6px;top:191.4px;width:31px;height:31.1px;background:#FFFFFF;border:1px solid #D8D8D8;border-radius:7px"></div>
<svg style="left:0;top:0" width="1" height="1">
<path d="M670.4 198.9 Q671.2 202.6 674.6 203.4 Q671.2 204.2 670.4 207.9 Q669.6 204.2 666.2 203.4 Q669.6 202.6 670.4 198.9 Z" fill="#1E1E1E"/>
<path d="M674.6 206 Q675.1 208.3 677.2 208.8 Q675.1 209.3 674.6 211.8 Q674.1 209.3 672 208.8 Q674.1 208.3 674.6 206 Z" fill="#1E1E1E"/>
<path d="M662.8 209.6 L666.6 206.3 M666.4 210.6 L668.6 208.3 M663.2 213.5 L664.9 212.1 M667.3 214.2 L669.7 211.5" stroke="#1E1E1E" stroke-width="1.3" stroke-linecap="round"/>
</svg>
<!-- MAIN SLIDE -->
<div class="a" style="left:650px;top:227px;width:1060px;height:737px">
<div class="a" style="left:0;top:0;width:1060px;height:737px;background:#0A98B3"></div>
<div class="a" style="left:8.6px;top:8.8px;width:1042.4px;height:719.4px;background:#fff"></div>
<div class="t" style="left:66.60px;top:43.62px;font-size:31.4px;font-weight:bold;color:#224D86;transform:scaleX(0.8407);transform-origin:0 0;-webkit-text-stroke:0.3px #234E87;">Project Status</div>
<div class="a" style="left:63.10px;top:105.00px;width:201.70px;height:30.80px;background:#4F81BD;box-shadow:inset 0 0 0 1.3px #0d0d14"></div>
<div class="t" style="left:74.00px;top:112.76px;font-size:14.7px;font-weight:bold;color:#fff;">Status: Overall Project</div>
<div class="a" style="left:272.10px;top:105.00px;width:67.70px;height:30.80px;background:#4F81BD;box-shadow:inset 0 0 0 1.3px #0d0d14"></div>
<div class="t" style="left:282.90px;top:112.76px;font-size:14.7px;font-weight:bold;color:#fff;">Status</div>
<div class="a" style="left:347.00px;top:105.00px;width:68.70px;height:30.80px;background:#4F81BD;box-shadow:inset 0 0 0 1.3px #0d0d14"></div>
<div class="t" style="left:358.20px;top:112.76px;font-size:14.7px;font-weight:bold;color:#fff;">Trend</div>
<div class="a" style="left:423.10px;top:104.40px;width:228.80px;height:30.35px;background:#4F81BD;box-shadow:inset 0 0 0 1.3px #0d0d14"></div>
<div class="t" style="left:431.60px;top:112.66px;font-size:14.7px;font-weight:bold;color:#fff;">Period: xx</div>
<div class="a" style="left:63.10px;top:143.20px;width:201.70px;height:34.20px;background:#D9D9D9;box-shadow:inset 0 0 0 1.3px #0d0d14"></div>
<div class="t" style="left:73.60px;top:153.16px;font-size:14.7px;font-weight:bold;color:#F4F4F4;">Time</div>
<div class="a" style="left:272.10px;top:143.20px;width:67.70px;height:34.20px;background:#D9D9D9;box-shadow:inset 0 0 0 1.3px #0d0d14"></div>
<div class="a" style="left:291.30px;top:145.90px;width:27.40px;height:27.40px;border-radius:50%;background:radial-gradient(circle at 50% 45%,#2C9A2F 0,#146E18 100%);box-shadow:inset 0 0 0 1.2px #06300a"></div>
<div class="t" style="left:298.34px;top:151.23px;font-size:17.125px;font-weight:bold;color:#F4F8F0;">G</div>
<div class="a" style="left:347.00px;top:143.20px;width:68.70px;height:34.20px;background:#D9D9D9;box-shadow:inset 0 0 0 1.3px #0d0d14"></div>
<svg style="left:0;top:0" width="1" height="1"><defs><linearGradient id="gG367167" x1="0" y1="0" x2="0" y2="1"><stop offset="0" stop-color="#2E9B35"/><stop offset="1" stop-color="#17711E"/></linearGradient></defs><polygon points="367.45,162.05 387.65,162.05 387.65,155.55 399.25,167.35 387.65,179.15 387.65,172.65 367.45,172.65" fill="url(#gG367167)" stroke="#0a2f0c" stroke-width="1" transform="rotate(-30 367.45 167.35)"/></svg>
<div class="a" style="left:423.10px;top:142.25px;width:228.80px;height:34.35px;background:#4F81BD;box-shadow:inset 0 0 0 1.3px #0d0d14"></div>
<div class="t" style="left:431.60px;top:152.66px;font-size:14.7px;font-weight:bold;color:#fff;">Date: October 2019</div>
<div class="a" style="left:63.10px;top:185.20px;width:201.70px;height:34.50px;background:#D9D9D9;box-shadow:inset 0 0 0 1.3px #0d0d14"></div>
<div class="t" style="left:72.90px;top:195.36px;font-size:14.7px;font-weight:bold;color:#F4F4F4;">Risk</div>
<div class="a" style="left:272.10px;top:185.20px;width:67.70px;height:34.50px;background:#D9D9D9;box-shadow:inset 0 0 0 1.3px #0d0d14"></div>
<div class="a" style="left:291.30px;top:188.20px;width:27.40px;height:27.40px;border-radius:50%;background:radial-gradient(circle at 50% 45%,#2C9A2F 0,#146E18 100%);box-shadow:inset 0 0 0 1.2px #06300a"></div>
<div class="t" style="left:298.34px;top:193.53px;font-size:17.125px;font-weight:bold;color:#F4F8F0;">G</div>
<div class="a" style="left:347.00px;top:185.20px;width:68.70px;height:34.50px;background:#D9D9D9;box-shadow:inset 0 0 0 1.3px #0d0d14"></div>
<svg style="left:0;top:0" width="1" height="1"><defs><linearGradient id="gG367209" x1="0" y1="0" x2="0" y2="1"><stop offset="0" stop-color="#2E9B35"/><stop offset="1" stop-color="#17711E"/></linearGradient></defs><polygon points="367.45,203.80 387.65,203.80 387.65,197.30 399.25,209.10 387.65,220.90 387.65,214.40 367.45,214.40" fill="url(#gG367209)" stroke="#0a2f0c" stroke-width="1" transform="rotate(-30 367.45 209.1)"/></svg>
<div class="a" style="left:423.10px;top:184.10px;width:228.80px;height:34.40px;background:#4F81BD;box-shadow:inset 0 0 0 1.3px #0d0d14"></div>
<div class="t" style="left:431.60px;top:194.56px;font-size:14.7px;font-weight:bold;color:#fff;transform:scaleX(1.0184);transform-origin:0 0;">Author: Mark Whitfield</div>
<div class="a" style="left:658.20px;top:103.25px;width:185.70px;height:115.15px;background:#C0504D;box-shadow:inset 0 0 0 1.3px #0d0d14"></div>
<div class="t" style="left:663.00px;top:107.74px;font-size:10.7px;font-weight:bold;color:#FBF3F0;">Status:</div>
<div class="t" style="left:677.17px;top:142.74px;font-size:10.7px;font-weight:bold;color:#FBF3F0;">On</div>
<div class="t" style="left:662.41px;top:154.84px;font-size:10.7px;font-weight:bold;color:#FBF3F0;">schedule</div>
<div class="t" style="left:724.41px;top:125.54px;font-size:10.7px;font-weight:bold;color:#FBF3F0;">Activities</div>
<div class="t" style="left:727.69px;top:137.64px;font-size:10.7px;font-weight:bold;color:#FBF3F0;">initiated</div>
<div class="t" style="left:722.33px;top:148.54px;font-size:10.7px;font-weight:bold;color:#FBF3F0;">by Project</div>
<div class="t" style="left:715.50px;top:161.14px;font-size:10.7px;font-weight:bold;color:#FBF3F0;">Management</div>
<div class="t" style="left:787.41px;top:121.54px;font-size:10.7px;font-weight:bold;color:#FBF3F0;">Activities</div>
<div class="t" style="left:785.02px;top:131.84px;font-size:10.7px;font-weight:bold;color:#FBF3F0;">necessary</div>
<div class="t" style="left:799.31px;top:143.34px;font-size:10.7px;font-weight:bold;color:#FBF3F0;">from</div>
<div class="t" style="left:789.79px;top:153.64px;font-size:10.7px;font-weight:bold;color:#FBF3F0;">Steering</div>
<div class="t" style="left:795.74px;top:163.44px;font-size:10.7px;font-weight:bold;color:#FBF3F0;">Board</div>
<div class="a" style="left:677.00px;top:182.80px;width:27.60px;height:27.60px;border-radius:50%;background:radial-gradient(circle at 50% 45%,#2C9A2F 0,#146E18 100%);box-shadow:inset 0 0 0 1.2px #06300a"></div>
<div class="t" style="left:684.09px;top:188.17px;font-size:17.25px;font-weight:bold;color:#F4F8F0;">G</div>
<div class="a" style="left:737.40px;top:183.10px;width:27.00px;height:27.00px;border-radius:50%;background:radial-gradient(circle at 50% 45%,#F6BC3C 0,#E89E1C 100%);box-shadow:inset 0 0 0 1.2px #3a2600"></div>
<div class="t" style="left:744.81px;top:188.36px;font-size:16.875px;font-weight:bold;color:#F4F8F0;">A</div>
<div class="a" style="left:797.20px;top:182.80px;width:27.60px;height:27.60px;border-radius:50%;background:radial-gradient(circle at 50% 45%,#B8444A 0,#8C2A2F 100%);box-shadow:inset 0 0 0 1.2px #3a0c0e"></div>
<div class="t" style="left:804.77px;top:188.17px;font-size:17.25px;font-weight:bold;color:#F4F8F0;">R</div>
<div class="a" style="left:850.20px;top:103.40px;width:145.80px;height:115.00px;background:#C0504D;box-shadow:inset 0 0 0 1.3px #0d0d14"></div>
<div class="a" style="left:850.2px;top:138px;width:145.8px;height:1.3px;background:#1a0a0a"></div>
<div class="a" style="left:850.2px;top:167.1px;width:145.8px;height:1.3px;background:#1a0a0a"></div>
<div class="t" style="left:860.50px;top:110.84px;font-size:10.7px;font-weight:bold;color:#FBF3F0;">Trend:</div>
<div class="t" style="left:860.50px;top:124.34px;font-size:10.7px;font-weight:bold;color:#FBF3F0;">Looking good</div>
<div class="t" style="left:860.50px;top:144.44px;font-size:10.7px;font-weight:bold;color:#FBF3F0;">Management</div>
<div class="t" style="left:860.50px;top:156.34px;font-size:10.7px;font-weight:bold;color:#FBF3F0;">attention</div>
<div class="t" style="left:860.50px;top:176.24px;font-size:10.7px;font-weight:bold;color:#FBF3F0;">Massive</div>
<div class="t" style="left:860.50px;top:190.74px;font-size:10.7px;font-weight:bold;color:#FBF3F0;">management</div>
<div class="t" style="left:860.50px;top:204.14px;font-size:10.7px;font-weight:bold;color:#FBF3F0;">action</div>
<svg style="left:0;top:0" width="1" height="1"><defs><linearGradient id="gG944131" x1="0" y1="0" x2="0" y2="1"><stop offset="0" stop-color="#2E9B35"/><stop offset="1" stop-color="#17711E"/></linearGradient></defs><polygon points="944.50,126.65 970.80,126.65 970.80,119.70 983.10,131.55 970.80,143.40 970.80,136.45 944.50,136.45" fill="url(#gG944131)" stroke="#0a2f0c" stroke-width="1" transform="rotate(-31 944.5 131.55)"/></svg>
<svg style="left:0;top:0" width="1" height="1"><defs><linearGradient id="gY942156" x1="0" y1="0" x2="0" y2="1"><stop offset="0" stop-color="#F7C24A"/><stop offset="1" stop-color="#E8A21E"/></linearGradient></defs><polygon points="942.40,151.60 968.80,151.60 968.80,145.05 980.50,156.85 968.80,168.65 968.80,162.10 942.40,162.10" fill="url(#gY942156)" stroke="#3a2800" stroke-width="1"/></svg>
<svg style="left:0;top:0" width="1" height="1"><defs><linearGradient id="gR944184" x1="0" y1="0" x2="0" y2="1"><stop offset="0" stop-color="#B8464B"/><stop offset="1" stop-color="#99303A"/></linearGradient></defs><polygon points="944.00,179.95 970.70,179.95 970.70,173.90 983.20,184.55 970.70,195.20 970.70,189.15 944.00,189.15" fill="url(#gR944184)" stroke="#3a0c0e" stroke-width="1" transform="rotate(29.8 944 184.55)"/></svg>
<div class="a" style="left:63px;top:231.8px;width:933px;height:1.5px;background:repeating-linear-gradient(90deg,#1a1a1a 0 4px,transparent 4px 7px)"></div>
<div class="a" style="left:63.10px;top:247.20px;width:201.70px;height:31.20px;background:#4F81BD;box-shadow:inset 0 0 0 1.3px #0d0d14"></div>
<div class="t" style="left:72.60px;top:255.16px;font-size:14.7px;font-weight:bold;color:#fff;transform:scaleX(1.0249);transform-origin:0 0;">Phase/Task</div>
<div class="a" style="left:272.10px;top:247.20px;width:67.70px;height:31.20px;background:#4F81BD;box-shadow:inset 0 0 0 1.3px #0d0d14"></div>
<div class="t" style="left:282.50px;top:254.96px;font-size:14.7px;font-weight:bold;color:#fff;">Status</div>
<div class="a" style="left:347.10px;top:247.20px;width:68.70px;height:31.20px;background:#4F81BD;box-shadow:inset 0 0 0 1.3px #0d0d14"></div>
<div class="t" style="left:358.30px;top:254.96px;font-size:14.7px;font-weight:bold;color:#fff;">Trend</div>
<div class="a" style="left:423.10px;top:247.20px;width:572.90px;height:31.20px;background:#4F81BD;box-shadow:inset 0 0 0 1.3px #0d0d14"></div>
<div class="t" style="left:433.00px;top:254.96px;font-size:14.7px;font-weight:bold;color:#fff;">Actions/Information (Summary)</div>
<div class="a" style="left:63.10px;top:293.00px;width:201.70px;height:88.50px;background:#D9D9D9;box-shadow:inset 0 0 0 1.3px #0d0d14"></div>
<div class="t" style="left:72.00px;top:329.96px;font-size:14.7px;font-weight:bold;color:#F6F6F6;">xx</div>
<div class="a" style="left:272.10px;top:293.00px;width:67.70px;height:88.50px;background:#D9D9D9;box-shadow:inset 0 0 0 1.3px #0d0d14"></div>
<div class="a" style="left:293.10px;top:324.00px;width:26.80px;height:26.80px;border-radius:50%;background:radial-gradient(circle at 50% 45%,#F6BC3C 0,#E89E1C 100%);box-shadow:inset 0 0 0 1.2px #3a2600"></div>
<div class="t" style="left:300.45px;top:329.22px;font-size:16.75px;font-weight:bold;color:#F4F8F0;">A</div>
<div class="a" style="left:348.10px;top:293.00px;width:67.70px;height:88.50px;background:#D9D9D9;box-shadow:inset 0 0 0 1.3px #0d0d14"></div>
<svg style="left:0;top:0" width="1" height="1"><defs><linearGradient id="gY361338" x1="0" y1="0" x2="0" y2="1"><stop offset="0" stop-color="#F7C24A"/><stop offset="1" stop-color="#E8A21E"/></linearGradient></defs><polygon points="361.00,332.20 388.10,332.20 388.10,326.15 400.00,338.35 388.10,350.55 388.10,344.50 361.00,344.50" fill="url(#gY361338)" stroke="#3a2800" stroke-width="1"/></svg>
<div class="a" style="left:423.10px;top:293.00px;width:572.90px;height:90.60px;background:#fff;box-shadow:inset 0 0 0 1.3px #0d0d14"></div>
<div class="a" style="left:433.6px;top:322.9px;width:3px;height:3px;border-radius:50%;background:#000"></div>
<div class="t" style="left:442.30px;top:317.58px;font-size:12.6px;font-weight:bold;color:#000;">xx</div>
<div class="a" style="left:63.10px;top:388.20px;width:201.70px;height:142.50px;background:#D9D9D9;box-shadow:inset 0 0 0 1.3px #0d0d14"></div>
<div class="t" style="left:72.00px;top:452.16px;font-size:14.7px;font-weight:bold;color:#F6F6F6;">xx</div>
<div class="a" style="left:272.10px;top:388.20px;width:67.70px;height:142.50px;background:#D9D9D9;box-shadow:inset 0 0 0 1.3px #0d0d14"></div>
<div class="a" style="left:291.10px;top:445.90px;width:27.60px;height:27.60px;border-radius:50%;background:radial-gradient(circle at 50% 45%,#F6BC3C 0,#E89E1C 100%);box-shadow:inset 0 0 0 1.2px #3a2600"></div>
<div class="t" style="left:298.67px;top:451.27px;font-size:17.25px;font-weight:bold;color:#F4F8F0;">A</div>
<div class="a" style="left:348.20px;top:388.20px;width:68.40px;height:142.50px;background:#D9D9D9;box-shadow:inset 0 0 0 1.3px #0d0d14"></div>
<svg style="left:0;top:0" width="1" height="1"><defs><linearGradient id="gY361458" x1="0" y1="0" x2="0" y2="1"><stop offset="0" stop-color="#F7C24A"/><stop offset="1" stop-color="#E8A21E"/></linearGradient></defs><polygon points="361.90,452.40 388.40,452.40 388.40,445.80 401.20,458.20 388.40,470.60 388.40,464.00 361.90,464.00" fill="url(#gY361458)" stroke="#3a2800" stroke-width="1"/></svg>
<div class="a" style="left:423.80px;top:388.20px;width:573.00px;height:142.50px;background:#fff;box-shadow:inset 0 0 0 1.3px #0d0d14"></div>
<div class="a" style="left:432.8px;top:455.1px;width:3px;height:3px;border-radius:50%;background:#000"></div>
<div class="t" style="left:441.40px;top:449.83px;font-size:12.6px;font-weight:bold;color:#000;">xx</div>
<div class="a" style="left:63.10px;top:538.40px;width:201.70px;height:81.80px;background:#D9D9D9;box-shadow:inset 0 0 0 1.3px #0d0d14"></div>
<div class="t" style="left:72.00px;top:572.01px;font-size:14.7px;font-weight:bold;color:#F6F6F6;">xx</div>
<div class="a" style="left:272.10px;top:538.40px;width:67.70px;height:81.80px;background:#D9D9D9;box-shadow:inset 0 0 0 1.3px #0d0d14"></div>
<div class="a" style="left:291.10px;top:565.00px;width:27.60px;height:27.60px;border-radius:50%;background:radial-gradient(circle at 50% 45%,#2C9A2F 0,#146E18 100%);box-shadow:inset 0 0 0 1.2px #06300a"></div>
<div class="t" style="left:298.19px;top:570.37px;font-size:17.25px;font-weight:bold;color:#F4F8F0;">G</div>
<div class="a" style="left:347.50px;top:538.40px;width:68.10px;height:81.80px;background:#D9D9D9;box-shadow:inset 0 0 0 1.3px #0d0d14"></div>
<svg style="left:0;top:0" width="1" height="1"><defs><linearGradient id="gG367585" x1="0" y1="0" x2="0" y2="1"><stop offset="0" stop-color="#2E9B35"/><stop offset="1" stop-color="#17711E"/></linearGradient></defs><polygon points="367.45,580.60 387.65,580.60 387.65,574.10 399.25,585.90 387.65,597.70 387.65,591.20 367.45,591.20" fill="url(#gG367585)" stroke="#0a2f0c" stroke-width="1" transform="rotate(-30 367.45 585.9)"/></svg>
<div class="a" style="left:423.80px;top:538.40px;width:573.00px;height:83.00px;background:#fff;box-shadow:inset 0 0 0 1.3px #0d0d14"></div>
<div class="a" style="left:434px;top:578.4px;width:3px;height:3px;border-radius:50%;background:#000"></div>
<div class="t" style="left:442.60px;top:573.13px;font-size:12.6px;font-weight:bold;color:#000;">xx</div>
<div class="a" style="left:8.6px;top:645.5px;width:1042.4px;height:1.2px;background:#1F3A5A"></div>
<div class="t" style="left:24.70px;top:704.93px;font-size:11.3px;font-weight:bold;color:#111;transform:scaleX(0.8394);transform-origin:0 0;">© Mark Whitfield 2019 - 2025 – All rights reserved</div>
</div>
<div class="a" style="left:0;top:178px;width:432px;height:832px;overflow:hidden">
<div class="a" style="left:32px;top:18px;width:382px;height:267px;border:3px solid #A54A33;border-radius:6px;background:#fff"></div>
<div class="a" style="left:36px;top:21.5px;width:1060px;height:737px;transform:scale(0.3528);transform-origin:0 0">
<div class="a" style="left:0;top:0;width:1060px;height:737px;background:#3A8C98"></div>
<div class="a" style="left:4.6px;top:4.6px;width:1050.8px;height:727.8px;background:#fff"></div>
<div class="t" style="left:65.00px;top:40.99px;font-size:32.5px;font-weight:bold;color:#234E87;transform:scaleX(0.8236);transform-origin:0 0;">Project Status</div>
<div class="a" style="left:63.10px;top:105.00px;width:201.70px;height:30.80px;background:#4F81BD;box-shadow:inset 0 0 0 3.0px #0d0d14"></div>
<div class="t" style="left:74.00px;top:112.76px;font-size:14.7px;font-weight:bold;color:#fff;">Status: Overall Project</div>
<div class="a" style="left:272.10px;top:105.00px;width:67.70px;height:30.80px;background:#4F81BD;box-shadow:inset 0 0 0 3.0px #0d0d14"></div>
<div class="t" style="left:282.90px;top:112.76px;font-size:14.7px;font-weight:bold;color:#fff;">Status</div>
<div class="a" style="left:347.00px;top:105.00px;width:68.70px;height:30.80px;background:#4F81BD;box-shadow:inset 0 0 0 3.0px #0d0d14"></div>
<div class="t" style="left:358.20px;top:112.76px;font-size:14.7px;font-weight:bold;color:#fff;">Trend</div>
<div class="a" style="left:423.10px;top:104.40px;width:228.80px;height:30.35px;background:#4F81BD;box-shadow:inset 0 0 0 3.0px #0d0d14"></div>
<div class="t" style="left:431.60px;top:112.66px;font-size:14.7px;font-weight:bold;color:#fff;">Period: xx</div>
<div class="a" style="left:63.10px;top:143.20px;width:201.70px;height:34.20px;background:#D9D9D9;box-shadow:inset 0 0 0 3.0px #0d0d14"></div>
<div class="t" style="left:73.60px;top:153.16px;font-size:14.7px;font-weight:bold;color:#F4F4F4;">Time</div>
<div class="a" style="left:272.10px;top:143.20px;width:67.70px;height:34.20px;background:#D9D9D9;box-shadow:inset 0 0 0 3.0px #0d0d14"></div>
<div class="a" style="left:291.30px;top:145.90px;width:27.40px;height:27.40px;border-radius:50%;background:radial-gradient(circle at 50% 45%,#2C9A2F 0,#146E18 100%);box-shadow:inset 0 0 0 1.2px #06300a"></div>
<div class="t" style="left:298.34px;top:151.23px;font-size:17.125px;font-weight:bold;color:#F4F8F0;">G</div>
<div class="a" style="left:347.00px;top:143.20px;width:68.70px;height:34.20px;background:#D9D9D9;box-shadow:inset 0 0 0 3.0px #0d0d14"></div>
<svg style="left:0;top:0" width="1" height="1"><defs><linearGradient id="gG367167" x1="0" y1="0" x2="0" y2="1"><stop offset="0" stop-color="#2E9B35"/><stop offset="1" stop-color="#17711E"/></linearGradient></defs><polygon points="367.45,162.05 387.65,162.05 387.65,155.55 399.25,167.35 387.65,179.15 387.65,172.65 367.45,172.65" fill="url(#gG367167)" stroke="#0a2f0c" stroke-width="1" transform="rotate(-30 367.45 167.35)"/></svg>
<div class="a" style="left:423.10px;top:142.25px;width:228.80px;height:34.35px;background:#4F81BD;box-shadow:inset 0 0 0 3.0px #0d0d14"></div>
<div class="t" style="left:431.60px;top:152.66px;font-size:14.7px;font-weight:bold;color:#fff;">Date: October 2019</div>
<div class="a" style="left:63.10px;top:185.20px;width:201.70px;height:34.50px;background:#D9D9D9;box-shadow:inset 0 0 0 3.0px #0d0d14"></div>
<div class="t" style="left:72.90px;top:195.36px;font-size:14.7px;font-weight:bold;color:#F4F4F4;">Risk</div>
<div class="a" style="left:272.10px;top:185.20px;width:67.70px;height:34.50px;background:#D9D9D9;box-shadow:inset 0 0 0 3.0px #0d0d14"></div>
<div class="a" style="left:291.30px;top:188.20px;width:27.40px;height:27.40px;border-radius:50%;background:radial-gradient(circle at 50% 45%,#2C9A2F 0,#146E18 100%);box-shadow:inset 0 0 0 1.2px #06300a"></div>
<div class="t" style="left:298.34px;top:193.53px;font-size:17.125px;font-weight:bold;color:#F4F8F0;">G</div>
<div class="a" style="left:347.00px;top:185.20px;width:68.70px;height:34.50px;background:#D9D9D9;box-shadow:inset 0 0 0 3.0px #0d0d14"></div>
<svg style="left:0;top:0" width="1" height="1"><defs><linearGradient id="gG367209" x1="0" y1="0" x2="0" y2="1"><stop offset="0" stop-color="#2E9B35"/><stop offset="1" stop-color="#17711E"/></linearGradient></defs><polygon points="367.45,203.80 387.65,203.80 387.65,197.30 399.25,209.10 387.65,220.90 387.65,214.40 367.45,214.40" fill="url(#gG367209)" stroke="#0a2f0c" stroke-width="1" transform="rotate(-30 367.45 209.1)"/></svg>
<div class="a" style="left:423.10px;top:184.10px;width:228.80px;height:34.40px;background:#4F81BD;box-shadow:inset 0 0 0 3.0px #0d0d14"></div>
<div class="t" style="left:431.60px;top:194.56px;font-size:14.7px;font-weight:bold;color:#fff;transform:scaleX(1.0184);transform-origin:0 0;">Author: Mark Whitfield</div>
<div class="a" style="left:658.20px;top:103.25px;width:185.70px;height:115.15px;background:#C0504D;box-shadow:inset 0 0 0 3.0px #0d0d14"></div>
<div class="t" style="left:663.00px;top:107.74px;font-size:10.7px;font-weight:bold;color:#FBF3F0;">Status:</div>
<div class="t" style="left:677.17px;top:142.74px;font-size:10.7px;font-weight:bold;color:#FBF3F0;">On</div>
<div class="t" style="left:662.41px;top:154.84px;font-size:10.7px;font-weight:bold;color:#FBF3F0;">schedule</div>
<div class="t" style="left:724.41px;top:125.54px;font-size:10.7px;font-weight:bold;color:#FBF3F0;">Activities</div>
<div class="t" style="left:727.69px;top:137.64px;font-size:10.7px;font-weight:bold;color:#FBF3F0;">initiated</div>
<div class="t" style="left:722.33px;top:148.54px;font-size:10.7px;font-weight:bold;color:#FBF3F0;">by Project</div>
<div class="t" style="left:715.50px;top:161.14px;font-size:10.7px;font-weight:bold;color:#FBF3F0;">Management</div>
<div class="t" style="left:787.41px;top:121.54px;font-size:10.7px;font-weight:bold;color:#FBF3F0;">Activities</div>
<div class="t" style="left:785.02px;top:131.84px;font-size:10.7px;font-weight:bold;color:#FBF3F0;">necessary</div>
<div class="t" style="left:799.31px;top:143.34px;font-size:10.7px;font-weight:bold;color:#FBF3F0;">from</div>
<div class="t" style="left:789.79px;top:153.64px;font-size:10.7px;font-weight:bold;color:#FBF3F0;">Steering</div>
<div class="t" style="left:795.74px;top:163.44px;font-size:10.7px;font-weight:bold;color:#FBF3F0;">Board</div>
<div class="a" style="left:677.00px;top:182.80px;width:27.60px;height:27.60px;border-radius:50%;background:radial-gradient(circle at 50% 45%,#2C9A2F 0,#146E18 100%);box-shadow:inset 0 0 0 1.2px #06300a"></div>
<div class="t" style="left:684.09px;top:188.17px;font-size:17.25px;font-weight:bold;color:#F4F8F0;">G</div>
<div class="a" style="left:737.40px;top:183.10px;width:27.00px;height:27.00px;border-radius:50%;background:radial-gradient(circle at 50% 45%,#F6BC3C 0,#E89E1C 100%);box-shadow:inset 0 0 0 1.2px #3a2600"></div>
<div class="t" style="left:744.81px;top:188.36px;font-size:16.875px;font-weight:bold;color:#F4F8F0;">A</div>
<div class="a" style="left:797.20px;top:182.80px;width:27.60px;height:27.60px;border-radius:50%;background:radial-gradient(circle at 50% 45%,#B8444A 0,#8C2A2F 100%);box-shadow:inset 0 0 0 1.2px #3a0c0e"></div>
<div class="t" style="left:804.77px;top:188.17px;font-size:17.25px;font-weight:bold;color:#F4F8F0;">R</div>
<div class="a" style="left:850.20px;top:103.40px;width:145.80px;height:115.00px;background:#C0504D;box-shadow:inset 0 0 0 3.0px #0d0d14"></div>
<div class="a" style="left:850.2px;top:138px;width:145.8px;height:1.3px;background:#1a0a0a"></div>
<div class="a" style="left:850.2px;top:167.1px;width:145.8px;height:1.3px;background:#1a0a0a"></div>
<div class="t" style="left:860.50px;top:110.84px;font-size:10.7px;font-weight:bold;color:#FBF3F0;">Trend:</div>
<div class="t" style="left:860.50px;top:124.34px;font-size:10.7px;font-weight:bold;color:#FBF3F0;">Looking good</div>
<div class="t" style="left:860.50px;top:144.44px;font-size:10.7px;font-weight:bold;color:#FBF3F0;">Management</div>
<div class="t" style="left:860.50px;top:156.34px;font-size:10.7px;font-weight:bold;color:#FBF3F0;">attention</div>
<div class="t" style="left:860.50px;top:176.24px;font-size:10.7px;font-weight:bold;color:#FBF3F0;">Massive</div>
<div class="t" style="left:860.50px;top:190.74px;font-size:10.7px;font-weight:bold;color:#FBF3F0;">management</div>
<div class="t" style="left:860.50px;top:204.14px;font-size:10.7px;font-weight:bold;color:#FBF3F0;">action</div>
<svg style="left:0;top:0" width="1" height="1"><defs><linearGradient id="gG944131" x1="0" y1="0" x2="0" y2="1"><stop offset="0" stop-color="#2E9B35"/><stop offset="1" stop-color="#17711E"/></linearGradient></defs><polygon points="944.50,126.65 970.80,126.65 970.80,119.70 983.10,131.55 970.80,143.40 970.80,136.45 944.50,136.45" fill="url(#gG944131)" stroke="#0a2f0c" stroke-width="1" transform="rotate(-31 944.5 131.55)"/></svg>
<svg style="left:0;top:0" width="1" height="1"><defs><linearGradient id="gY942156" x1="0" y1="0" x2="0" y2="1"><stop offset="0" stop-color="#F7C24A"/><stop offset="1" stop-color="#E8A21E"/></linearGradient></defs><polygon points="942.40,151.60 968.80,151.60 968.80,145.05 980.50,156.85 968.80,168.65 968.80,162.10 942.40,162.10" fill="url(#gY942156)" stroke="#3a2800" stroke-width="1"/></svg>
<svg style="left:0;top:0" width="1" height="1"><defs><linearGradient id="gR944184" x1="0" y1="0" x2="0" y2="1"><stop offset="0" stop-color="#B8464B"/><stop offset="1" stop-color="#99303A"/></linearGradient></defs><polygon points="944.00,179.95 970.70,179.95 970.70,173.90 983.20,184.55 970.70,195.20 970.70,189.15 944.00,189.15" fill="url(#gR944184)" stroke="#3a0c0e" stroke-width="1" transform="rotate(29.8 944 184.55)"/></svg>
<div class="a" style="left:63px;top:231px;width:933px;height:3.4px;background:repeating-linear-gradient(90deg,#111 0 9px,transparent 9px 14px)"></div>
<div class="a" style="left:63.10px;top:247.20px;width:201.70px;height:31.20px;background:#4F81BD;box-shadow:inset 0 0 0 3.0px #0d0d14"></div>
<div class="t" style="left:72.60px;top:255.16px;font-size:14.7px;font-weight:bold;color:#fff;transform:scaleX(1.0249);transform-origin:0 0;">Phase/Task</div>
<div class="a" style="left:272.10px;top:247.20px;width:67.70px;height:31.20px;background:#4F81BD;box-shadow:inset 0 0 0 3.0px #0d0d14"></div>
<div class="t" style="left:282.50px;top:254.96px;font-size:14.7px;font-weight:bold;color:#fff;">Status</div>
<div class="a" style="left:347.10px;top:247.20px;width:68.70px;height:31.20px;background:#4F81BD;box-shadow:inset 0 0 0 3.0px #0d0d14"></div>
<div class="t" style="left:358.30px;top:254.96px;font-size:14.7px;font-weight:bold;color:#fff;">Trend</div>
<div class="a" style="left:423.10px;top:247.20px;width:572.90px;height:31.20px;background:#4F81BD;box-shadow:inset 0 0 0 3.0px #0d0d14"></div>
<div class="t" style="left:433.00px;top:254.96px;font-size:14.7px;font-weight:bold;color:#fff;">Actions/Information (Summary)</div>
<div class="a" style="left:63.10px;top:293.00px;width:201.70px;height:88.50px;background:#D9D9D9;box-shadow:inset 0 0 0 3.0px #0d0d14"></div>
<div class="t" style="left:72.00px;top:329.96px;font-size:14.7px;font-weight:bold;color:#F6F6F6;">xx</div>
<div class="a" style="left:272.10px;top:293.00px;width:67.70px;height:88.50px;background:#D9D9D9;box-shadow:inset 0 0 0 3.0px #0d0d14"></div>
<div class="a" style="left:293.10px;top:324.00px;width:26.80px;height:26.80px;border-radius:50%;background:radial-gradient(circle at 50% 45%,#F6BC3C 0,#E89E1C 100%);box-shadow:inset 0 0 0 1.2px #3a2600"></div>
<div class="t" style="left:300.45px;top:329.22px;font-size:16.75px;font-weight:bold;color:#F4F8F0;">A</div>
<div class="a" style="left:348.10px;top:293.00px;width:67.70px;height:88.50px;background:#D9D9D9;box-shadow:inset 0 0 0 3.0px #0d0d14"></div>
<svg style="left:0;top:0" width="1" height="1"><defs><linearGradient id="gY361338" x1="0" y1="0" x2="0" y2="1"><stop offset="0" stop-color="#F7C24A"/><stop offset="1" stop-color="#E8A21E"/></linearGradient></defs><polygon points="361.00,332.20 388.10,332.20 388.10,326.15 400.00,338.35 388.10,350.55 388.10,344.50 361.00,344.50" fill="url(#gY361338)" stroke="#3a2800" stroke-width="1"/></svg>
<div class="a" style="left:423.10px;top:293.00px;width:572.90px;height:90.60px;background:#fff;box-shadow:inset 0 0 0 3.0px #0d0d14"></div>
<div class="a" style="left:433.6px;top:322.9px;width:3px;height:3px;border-radius:50%;background:#000"></div>
<div class="t" style="left:442.30px;top:317.58px;font-size:12.6px;font-weight:bold;color:#000;">xx</div>
<div class="a" style="left:63.10px;top:388.20px;width:201.70px;height:142.50px;background:#D9D9D9;box-shadow:inset 0 0 0 3.0px #0d0d14"></div>
<div class="t" style="left:72.00px;top:452.16px;font-size:14.7px;font-weight:bold;color:#F6F6F6;">xx</div>
<div class="a" style="left:272.10px;top:388.20px;width:67.70px;height:142.50px;background:#D9D9D9;box-shadow:inset 0 0 0 3.0px #0d0d14"></div>
<div class="a" style="left:291.10px;top:445.90px;width:27.60px;height:27.60px;border-radius:50%;background:radial-gradient(circle at 50% 45%,#F6BC3C 0,#E89E1C 100%);box-shadow:inset 0 0 0 1.2px #3a2600"></div>
<div class="t" style="left:298.67px;top:451.27px;font-size:17.25px;font-weight:bold;color:#F4F8F0;">A</div>
<div class="a" style="left:348.20px;top:388.20px;width:68.40px;height:142.50px;background:#D9D9D9;box-shadow:inset 0 0 0 3.0px #0d0d14"></div>
<svg style="left:0;top:0" width="1" height="1"><defs><linearGradient id="gY361458" x1="0" y1="0" x2="0" y2="1"><stop offset="0" stop-color="#F7C24A"/><stop offset="1" stop-color="#E8A21E"/></linearGradient></defs><polygon points="361.90,452.40 388.40,452.40 388.40,445.80 401.20,458.20 388.40,470.60 388.40,464.00 361.90,464.00" fill="url(#gY361458)" stroke="#3a2800" stroke-width="1"/></svg>
<div class="a" style="left:423.80px;top:388.20px;width:573.00px;height:142.50px;background:#fff;box-shadow:inset 0 0 0 3.0px #0d0d14"></div>
<div class="a" style="left:432.8px;top:455.1px;width:3px;height:3px;border-radius:50%;background:#000"></div>
<div class="t" style="left:441.40px;top:449.83px;font-size:12.6px;font-weight:bold;color:#000;">xx</div>
<div class="a" style="left:63.10px;top:538.40px;width:201.70px;height:81.80px;background:#D9D9D9;box-shadow:inset 0 0 0 3.0px #0d0d14"></div>
<div class="t" style="left:72.00px;top:572.01px;font-size:14.7px;font-weight:bold;color:#F6F6F6;">xx</div>
<div class="a" style="left:272.10px;top:538.40px;width:67.70px;height:81.80px;background:#D9D9D9;box-shadow:inset 0 0 0 3.0px #0d0d14"></div>
<div class="a" style="left:291.10px;top:565.00px;width:27.60px;height:27.60px;border-radius:50%;background:radial-gradient(circle at 50% 45%,#2C9A2F 0,#146E18 100%);box-shadow:inset 0 0 0 1.2px #06300a"></div>
<div class="t" style="left:298.19px;top:570.37px;font-size:17.25px;font-weight:bold;color:#F4F8F0;">G</div>
<div class="a" style="left:347.50px;top:538.40px;width:68.10px;height:81.80px;background:#D9D9D9;box-shadow:inset 0 0 0 3.0px #0d0d14"></div>
<svg style="left:0;top:0" width="1" height="1"><defs><linearGradient id="gG367585" x1="0" y1="0" x2="0" y2="1"><stop offset="0" stop-color="#2E9B35"/><stop offset="1" stop-color="#17711E"/></linearGradient></defs><polygon points="367.45,580.60 387.65,580.60 387.65,574.10 399.25,585.90 387.65,597.70 387.65,591.20 367.45,591.20" fill="url(#gG367585)" stroke="#0a2f0c" stroke-width="1" transform="rotate(-30 367.45 585.9)"/></svg>
<div class="a" style="left:423.80px;top:538.40px;width:573.00px;height:83.00px;background:#fff;box-shadow:inset 0 0 0 3.0px #0d0d14"></div>
<div class="a" style="left:434px;top:578.4px;width:3px;height:3px;border-radius:50%;background:#000"></div>
<div class="t" style="left:442.60px;top:573.13px;font-size:12.6px;font-weight:bold;color:#000;">xx</div>
<div class="a" style="left:8.6px;top:645.5px;width:1042.4px;height:3px;background:#1F3A5A"></div>
<div class="t" style="left:24.70px;top:704.93px;font-size:11.3px;font-weight:bold;color:#111;transform:scaleX(0.8394);transform-origin:0 0;">© Mark Whitfield 2019 - 2025 – All rights reserved</div>
</div>
<div class="a" style="left:36px;top:303px;width:1060px;height:737px;transform:scale(0.3528);transform-origin:0 0">
<div class="a" style="left:0;top:0;width:1060px;height:737px;background:#1A8A9E"></div>
<div class="a" style="left:6px;top:6px;width:1048px;height:725px;background:#fff"></div>
<div class="t" style="left:63.00px;top:37.84px;font-size:30.9px;font-weight:bold;color:#234E87;transform:scaleX(0.8646);transform-origin:0 0;">Progress and Priorities</div>
<div class="a" style="left:20.7px;top:82.7px;width:500.3px;height:558.3px;background:#fff;box-shadow:inset 0 0 0 4px #111"></div>
<div class="a" style="left:24.7px;top:86.7px;width:492.3px;height:22px;background:#8DB3E2;border-bottom:3px solid #111"></div>
<div class="t" style="left:30.70px;top:88.76px;font-size:18px;font-weight:bold;color:#fff;">Summary of Progress</div>
<div class="a" style="left:38.7px;top:118px;width:5px;height:5px;background:#333"></div>
<div class="t" style="left:60.70px;top:113.46px;font-size:16px;font-weight:bold;color:#111;">xxx</div>
<div class="a" style="left:539.5px;top:82.7px;width:496.1px;height:558.3px;background:#fff;box-shadow:inset 0 0 0 4px #111"></div>
<div class="a" style="left:543.5px;top:86.7px;width:488.1px;height:22px;background:#8DB3E2;border-bottom:3px solid #111"></div>
<div class="t" style="left:549.50px;top:88.76px;font-size:18px;font-weight:bold;color:#fff;">Priorities for next period:</div>
<div class="a" style="left:557.5px;top:118px;width:5px;height:5px;background:#333"></div>
<div class="t" style="left:579.50px;top:113.46px;font-size:16px;font-weight:bold;color:#111;">xxx</div>
<div class="a" style="left:8.6px;top:649px;width:1042.4px;height:3px;background:#1F3A5A"></div>
<div class="t" style="left:24.70px;top:704.93px;font-size:11.3px;font-weight:bold;color:#111;transform:scaleX(0.8394);transform-origin:0 0;">© Mark Whitfield 2019 - 2025 – All rights reserved</div>
</div>
<div class="a" style="left:36px;top:562px;width:374px;height:3px;background:transparent"></div>
<div class="a" style="left:36px;top:584.5px;width:1060px;height:737px;transform:scale(0.3528);transform-origin:0 0">
<div class="a" style="left:0;top:0;width:1060px;height:737px;background:#1A8A9E"></div>
<div class="a" style="left:6px;top:6px;width:1048px;height:725px;background:#fff"></div>
<div class="t" style="left:63.80px;top:38.74px;font-size:30.9px;font-weight:bold;color:#234E87;transform:scaleX(0.9123);transform-origin:0 0;">Milestone Status</div>
<div class="a" style="left:63px;top:143px;width:10px;height:10px;background:#111"></div>
<div class="t" style="left:82.00px;top:138.14px;font-size:27px;font-weight:normal;color:#111;">Show milestone status either in a pictorial format from planning tool (see</div>
<div class="t" style="left:82.00px;top:173.14px;font-size:27px;font-weight:normal;color:#111;transform:scaleX(1.1155);transform-origin:0 0;">next slide) or in a table e.g.;</div>
<div class="a" style="left:0;top:-3.4px;width:1060px;height:737px"><div class="a" style="left:59.5px;top:208px;width:955.2px;height:131px;background:#4A86D0;box-shadow:inset 0 0 0 3px #111"></div>
<div class="a" style="left:59.5px;top:246px;width:955.2px;height:3px;background:#111"></div>
<div class="t" style="left:68.00px;top:217.38px;font-size:22px;font-weight:bold;color:#fff;">Milestone Summary</div>
<div class="t" style="left:68.00px;top:268.22px;font-size:21px;font-weight:bold;color:#fff;">Key Deliverable /</div>
<div class="t" style="left:68.00px;top:292.22px;font-size:21px;font-weight:bold;color:#fff;">Milestone</div>
<div class="t" style="left:279.81px;top:282.22px;font-size:21px;font-weight:bold;color:#fff;">Baseline</div>
<div class="t" style="left:397.08px;top:256.22px;font-size:21px;font-weight:bold;color:#fff;">Actual /</div>
<div class="t" style="left:404.07px;top:280.22px;font-size:21px;font-weight:bold;color:#fff;">Latest</div>
<div class="t" style="left:391.23px;top:304.22px;font-size:21px;font-weight:bold;color:#fff;">Forecast</div>
<div class="t" style="left:500.00px;top:268.22px;font-size:21px;font-weight:bold;color:#fff;">%</div>
<div class="t" style="left:500.00px;top:292.22px;font-size:21px;font-weight:bold;color:#fff;">Complete</div>
<div class="t" style="left:659.67px;top:268.22px;font-size:21px;font-weight:bold;color:#fff;">RAG</div>
<div class="t" style="left:650.91px;top:292.22px;font-size:21px;font-weight:bold;color:#fff;">Status</div>
<div class="t" style="left:756.00px;top:282.22px;font-size:21px;font-weight:bold;color:#fff;">Comments</div>
<div class="a" style="left:265.5px;top:246px;width:3px;height:190px;background:#111"></div>
<div class="a" style="left:378.3px;top:246px;width:3px;height:190px;background:#111"></div>
<div class="a" style="left:490.2px;top:246px;width:3px;height:190px;background:#111"></div>
<div class="a" style="left:618.0px;top:246px;width:3px;height:190px;background:#111"></div>
<div class="a" style="left:745.1px;top:246px;width:3px;height:190px;background:#111"></div>
<div class="a" style="left:1012px;top:246px;width:3px;height:190px;background:#111"></div>
<div class="a" style="left:59.5px;top:337.5px;width:955.2px;height:3px;background:#111"></div>
<div class="a" style="left:59.5px;top:360.0px;width:955.2px;height:3px;background:#111"></div>
<div class="a" style="left:59.5px;top:385.3px;width:955.2px;height:3px;background:#111"></div>
<div class="a" style="left:59.5px;top:411.1px;width:955.2px;height:3px;background:#111"></div>
<div class="a" style="left:59.5px;top:434.0px;width:955.2px;height:3px;background:#111"></div>
<div class="a" style="left:621px;top:340.5px;width:124px;height:19.5px;background:#FF0000"></div>
<div class="a" style="left:621px;top:363.0px;width:124px;height:22.3px;background:#FFC000"></div>
<div class="a" style="left:621px;top:388.3px;width:124px;height:22.8px;background:#00B050"></div>
<div class="t" style="left:68.00px;top:343.46px;font-size:16px;font-weight:normal;color:#222;">Xxxxxxxxx</div>
<div class="t" style="left:292.45px;top:343.46px;font-size:16px;font-weight:normal;color:#222;">01/01/11</div>
<div class="t" style="left:404.45px;top:343.46px;font-size:16px;font-weight:normal;color:#222;">08/01/11</div>
<div class="t" style="left:500.00px;top:343.46px;font-size:16px;font-weight:normal;color:#222;">95%</div>
</div><div class="a" style="left:59.5px;top:613px;width:948px;height:32px;border:3px solid #111;border-radius:6px;background:#fff"></div>
<div class="t" style="left:73.00px;top:624.00px;font-size:13px;font-weight:bold;color:#111;">Key:</div>
<div class="a" style="left:132.2px;top:623px;width:11px;height:11px;background:#1F2F9F;transform:rotate(45deg)"></div>
<div class="t" style="left:152.70px;top:624.00px;font-size:13px;font-weight:bold;color:#111;">Completed</div>
<div class="a" style="left:241.1px;top:623px;width:11px;height:11px;background:#22CC44;transform:rotate(45deg)"></div>
<div class="t" style="left:261.60px;top:624.00px;font-size:13px;font-weight:bold;color:#111;">On Target</div>
<div class="a" style="left:341.5px;top:623px;width:11px;height:11px;background:#F07A2A;transform:rotate(45deg)"></div>
<div class="t" style="left:362.00px;top:624.00px;font-size:13px;font-weight:bold;color:#111;">Milestone delay Expected</div>
<div class="a" style="left:558.5px;top:623px;width:11px;height:11px;background:#D02020;transform:rotate(45deg)"></div>
<div class="t" style="left:579.00px;top:624.00px;font-size:13px;font-weight:bold;color:#111;">Major milestone delayed</div>
<div class="a" style="left:817.3px;top:623px;width:11px;height:11px;background:#22CC44;transform:rotate(45deg)"></div>
<div class="t" style="left:837.80px;top:624.00px;font-size:13px;font-weight:bold;color:#111;">Delayed Milestone</div>
<div class="a" style="left:767.5px;top:623px;width:11px;height:11px;background:#C8C8C8;transform:rotate(45deg)"></div>
<div class="a" style="left:784px;top:628px;width:25px;height:2px;background:#C02020"></div>
<div class="a" style="left:8.6px;top:650px;width:1042.4px;height:3px;background:#1F3A5A"></div>
</div>
</div>
<!-- STATUS BAR -->
<div class="a" style="left:0;top:1010px;width:1920px;height:23px;background:#F3F3F3;border-top:1px solid #C6C6C6"></div>
<div class="t" style="left:11.4px;top:1015.9px;font-size:12px;color:#333;transform:scaleX(0.965);transform-origin:0 0">Slide 6 of 15</div>
<svg style="left:0;top:0" width="1" height="1"><g fill="none" stroke="#424242" stroke-width="1">
<circle cx="115" cy="1015.2" r="1.6"/><path d="M108.2 1017.6 Q111.5 1019.2 115 1018.4 Q118.5 1019.2 121.8 1017.6 M113 1019 L112 1028 M117 1019 L117.6 1023"/>
<path d="M116.6 1025.2 L118.6 1027.4 L122.4 1022.6"/></g></svg>
<div class="t" style="left:126.2px;top:1015.9px;font-size:12px;color:#333;transform:scaleX(0.975);transform-origin:0 0">Accessibility: Good to go</div>
<svg style="left:0;top:0" width="1" height="1"><g fill="none" stroke="#424242" stroke-width="1">
<path d="M1489 1020.4 H1505 M1489 1024.4 H1505 M1489 1028.4 H1505 M1494.6 1016.6 L1497 1014.2 L1499.4 1016.6"/></g></svg>
<div class="t" style="left:1507.4px;top:1015.9px;font-size:12px;color:#333;transform:scaleX(0.96);transform-origin:0 0">Notes</div>
<div class="a" style="left:1556.3px;top:1011px;width:39.5px;height:20.4px;background:#DCDCDC"></div>
<svg style="left:0;top:0" width="1" height="1"><g fill="none" stroke="#424242" stroke-width="1.1">
<rect x="1569.5" y="1015.2" width="13.6" height="12"/><rect x="1572.4" y="1017.6" width="8.6" height="5.6"/><path d="M1571.6 1025.2 H1581.4"/>
<rect x="1608.8" y="1015.6" width="5.6" height="4.4"/><rect x="1617.4" y="1015.6" width="5.6" height="4.4"/><rect x="1608.8" y="1022.6" width="5.6" height="4.4"/><rect x="1617.4" y="1022.6" width="5.6" height="4.4"/>
<path d="M1649.4 1016.2 H1655.6 V1027.4 H1649.4 Z M1655.6 1016.2 H1662 V1027.4 H1655.6 M1651 1019 H1654 M1651 1021.4 H1654 M1651 1023.8 H1654 M1657.4 1019 H1660.4 M1657.4 1021.4 H1660.4 M1657.4 1023.8 H1660.4"/>
<path d="M1689.6 1015.2 H1701.8 M1690.8 1015.2 V1022.4 H1700.6 V1015.2 M1695.7 1022.4 V1026.6 M1692.2 1027 H1699.2"/>
<path d="M1722 1021.4 H1730"/><path d="M1839.8 1021.4 H1847.6 M1843.7 1017.5 V1025.3"/>
</g>
<path d="M1735.5 1021.4 H1835" stroke="#7A7A7A" stroke-width="1"/>
<rect x="1784.4" y="1015.8" width="4.6" height="10.8" fill="#5E5E5E"/>
<g fill="none" stroke="#424242" stroke-width="1"><rect x="1904.2" y="1017.6" width="6.8" height="7.2"/><path d="M1902.6 1018.8 L1900 1021.2 L1902.6 1023.6 M1912.6 1018.8 L1915.2 1021.2 L1912.6 1023.6 M1905.2 1015.6 L1907.6 1013.4 L1910 1015.6 M1905.2 1026.8 L1907.6 1029 L1910 1026.8"/></g>
</svg>
<div class="t" style="left:1861.3px;top:1015.9px;font-size:12px;color:#333;transform:scaleX(0.93);transform-origin:0 0">102%</div>
<!-- TASKBAR -->
<div class="a" style="left:0;top:1032px;width:1920px;height:48px;background:linear-gradient(90deg,#E2E0F4 0%,#E3E0F3 58%,#EAE2EE 65%,#F1E4E4 71.5%,#EDE3EA 77%,#E3E1F3 83%,#EAE2EF 91.5%,#E3E0F4 100%);border-top:1px solid #BEBCCC"></div>
<svg style="left:0;top:0" width="1" height="1">
<defs>
<linearGradient id="tbgr" x1="0" y1="0" x2="0" y2="1"><stop offset="0" stop-color="#5BC35B"/><stop offset="1" stop-color="#2A8F2A"/></linearGradient>
<linearGradient id="winl" x1="0" y1="0" x2="1" y2="1"><stop offset="0" stop-color="#35B6F6"/><stop offset="1" stop-color="#0A6CD6"/></linearGradient>
<linearGradient id="edg" x1="0" y1="0" x2="1" y2="1"><stop offset="0" stop-color="#3CCB7F"/><stop offset="0.5" stop-color="#1D9DE0"/><stop offset="1" stop-color="#0B56B8"/></linearGradient>
<linearGradient id="cpt1" x1="0" y1="0" x2="1" y2="1"><stop offset="0" stop-color="#2F7AF0"/><stop offset="0.5" stop-color="#22B99A"/><stop offset="1" stop-color="#F6C335"/></linearGradient>
<linearGradient id="cpt2" x1="0" y1="0" x2="1" y2="1"><stop offset="0" stop-color="#4C5BEA"/><stop offset="0.55" stop-color="#D05ADB"/><stop offset="1" stop-color="#F56A4F"/></linearGradient>
<linearGradient id="pptg" x1="0" y1="0" x2="1" y2="1"><stop offset="0" stop-color="#F2794F"/><stop offset="1" stop-color="#C43E1C"/></linearGradient>
</defs>
<!-- widget -->
<path d="M21 1058.5 Q28 1054.5 34.5 1051.6" fill="none" stroke="#3EA23E" stroke-width="2.2" stroke-linecap="round"/>
<rect x="20" y="1063.6" width="3.2" height="2.2" fill="#2F962F"/><rect x="25.6" y="1061.8" width="3.6" height="4" fill="#3A9E3A"/><rect x="31.6" y="1059" width="3.8" height="6.8" fill="#44A844"/><rect x="37.8" y="1054.4" width="4" height="11.4" fill="url(#tbgr)"/>
<circle cx="37.8" cy="1045.8" r="7.7" fill="#C4262A"/>
<text x="34.6" y="1050.4" font-family="Liberation Sans" font-size="11" fill="#fff">3</text>
<!-- windows -->
<rect x="573" y="1045.2" width="11" height="10.9" fill="url(#winl)"/><rect x="585.2" y="1045.2" width="10.9" height="10.9" fill="url(#winl)"/>
<rect x="573" y="1057.2" width="11" height="10.9" fill="url(#winl)"/><rect x="585.2" y="1057.2" width="10.9" height="10.9" fill="url(#winl)"/>
</svg>
<div class="a" style="left:609.6px;top:1040.9px;width:218px;height:30.6px;border-radius:15.3px;background:#F7F5FB;border:1px solid #D6D3E2"></div>
<svg style="left:0;top:0" width="1" height="1">
<circle cx="627.4" cy="1055.2" r="5.6" fill="none" stroke="#1E1E1E" stroke-width="1.6"/><path d="M631.4 1059.4 L634.6 1062.8" stroke="#1E1E1E" stroke-width="1.8" stroke-linecap="round"/>
<!-- task view -->
<rect x="849.6" y="1045" width="14.6" height="15" fill="#F4F4F4" stroke="#D0D0D8" stroke-width="0.6"/>
<path d="M840.8 1050.8 H849.6 V1060 H859 V1066.8 H840.8 Z" fill="#1A1A1A"/>
<rect x="845.6" y="1050.8" width="8.2" height="9" fill="#A8A8A8"/>
<!-- teams -->
<circle cx="901.6" cy="1050.6" r="3.6" fill="#7B83EB"/><path d="M896 1055.4 H908.2 V1061.8 Q908.2 1065.8 903.4 1065.8 Q898.6 1065.8 898 1061.8 Z" fill="#7B83EB"/>
<circle cx="894.6" cy="1049.4" r="4.4" fill="#5B5FC7"/><path d="M888.6 1054.4 H902.2 V1062 Q902.2 1066 895.6 1066 Q889 1066 888.6 1062 Z" fill="#5B5FC7"/>
<rect x="884.6" y="1052" width="11" height="11" rx="1.2" fill="#4B53BC"/><text x="887.2" y="1061.2" font-family="Liberation Sans" font-weight="bold" font-size="9" fill="#fff">T</text>
<!-- explorer -->
<path d="M928.8 1047 Q928.8 1045 930.8 1045 H937.6 L940 1047.6 H951.4 Q953.3 1047.6 953.3 1049.6 V1064.4 Q953.3 1066.4 951.4 1066.4 H930.8 Q928.8 1066.4 928.8 1064.4 Z" fill="#F6C847"/>
<path d="M928.8 1050 H953.3 V1064.4 Q953.3 1066.4 951.4 1066.4 H930.8 Q928.8 1066.4 928.8 1064.4 Z" fill="#FBD965"/>
<path d="M934 1058.8 H948.4 Q949.6 1058.8 949.6 1060 V1066.4 H932.8 V1060 Q932.8 1058.8 934 1058.8 Z" fill="#1C8BD6"/>
<rect x="938" y="1072.6" width="5.8" height="2.4" rx="1.2" fill="#7C7A8C"/>
<!-- copilot -->
<g transform="translate(972.9 1045) scale(0.815) translate(-1809.3 -87)">
<path d="M1826 87 Q1830.6 87 1832 90 L1834.6 95.6 H1827.6 Z" fill="#2456CC"/>
<path d="M1814.2 87 H1827.6 Q1830.2 87 1829.4 89.6 L1822.8 104.6 Q1821.8 106.8 1819.2 106.8 H1812.2 Q1809.2 106.8 1809.4 103.6 L1811 91.6 Q1811.8 87 1814.2 87 Z" fill="url(#cpl)"/>
<path d="M1817.6 106.2 H1824.8 L1823 111.6 Q1822.2 113.8 1820.6 113.8 Q1818.8 113.8 1818.4 111.6 Z" fill="#EE5F35"/>
<path d="M1829 95.2 H1836 Q1839.2 95.2 1838.8 98.6 L1837 109.6 Q1836.4 113.6 1833.4 113.6 H1824.4 Q1822.2 113.6 1823 111.4 L1826.8 97.6 Q1827.4 95.2 1829 95.2 Z" fill="url(#cpr)"/>
</g>
<!-- edge -->
<defs><linearGradient id="edb" x1="0" y1="0" x2="0.6" y2="1"><stop offset="0" stop-color="#1E9AE6"/><stop offset="1" stop-color="#0B4DA2"/></linearGradient>
<linearGradient id="edt" x1="0" y1="0" x2="1" y2="0.6"><stop offset="0" stop-color="#35BCEA"/><stop offset="0.55" stop-color="#2FC3B4"/><stop offset="1" stop-color="#62D85C"/></linearGradient></defs>
<circle cx="1029" cy="1056" r="12" fill="url(#edb)"/>
<path d="M1017.2 1054.6 Q1018.6 1044.1 1029 1044.1 Q1041 1044.1 1041 1054.4 Q1041 1059.8 1035.6 1059.8 Q1031.6 1059.8 1031.6 1056.6 Q1031.6 1051.4 1025.4 1051.4 Q1019.6 1051.4 1017.2 1054.6 Z" fill="url(#edt)"/>
<path d="M1026.2 1056.6 Q1026.2 1053.4 1029 1053.4 Q1031.6 1053.4 1031.6 1056.4 Q1032 1060.4 1035.4 1060.8 Q1037.4 1061 1039 1062 Q1035 1063.4 1031.4 1062 Q1026.2 1060 1026.2 1056.6 Z" fill="#D6F2F8"/>
<!-- store -->
<path d="M1066.6 1049 V1047.6 Q1066.6 1044.8 1069.6 1044.8 H1075.8 Q1078.8 1044.8 1078.8 1047.6 V1049" fill="none" stroke="#2D76C9" stroke-width="1.4"/>
<rect x="1061" y="1049" width="23.4" height="18.4" rx="2.4" fill="#1F4F96"/>
<rect x="1068.4" y="1053.2" width="4" height="4" fill="#F25022"/><rect x="1073.2" y="1053.2" width="4" height="4" fill="#7FBA00"/><rect x="1068.4" y="1058" width="4" height="4" fill="#00A4EF"/><rect x="1073.2" y="1058" width="4" height="4" fill="#FFB900"/>
<!-- help -->
<circle cx="1116.4" cy="1056" r="10.8" fill="#1E9BDC" stroke="#fff" stroke-width="0.8"/>
<path d="M1113 1052.6 Q1113 1049 1116.8 1049 Q1120.6 1049 1120.6 1052.4 Q1120.6 1054.6 1118.2 1055.8 Q1116.8 1056.6 1116.8 1058.6" fill="none" stroke="#fff" stroke-width="2.2" stroke-linecap="round"/>
<circle cx="1116.8" cy="1062.4" r="1.4" fill="#fff"/>
<circle cx="1126.3" cy="1045.9" r="7.4" fill="#F9C623"/>
<!-- chrome -->
<circle cx="1160.7" cy="1056" r="11.8" fill="#DB4437"/>
<path d="M1160.7 1056 L1150.5 1050.1 A11.8 11.8 0 0 0 1154.8 1066.2 Z" fill="#0F9D58"/>
<path d="M1160.7 1056 L1154.8 1066.2 A11.8 11.8 0 0 0 1172.5 1056 Z" fill="#0F9D58"/>
<path d="M1160.7 1056 L1172.5 1056 A11.8 11.8 0 0 0 1170.9 1050.1 L1160.7 1050.1 Z" fill="#FFCD40"/>
<path d="M1160.7 1050.1 H1170.9 A11.8 11.8 0 0 1 1166.6 1066.2 L1160.7 1056 Z" fill="#FFCD40"/>
<circle cx="1160.7" cy="1056" r="5.6" fill="#fff"/><circle cx="1160.7" cy="1056" r="4.4" fill="#4A8AF4"/>
<rect x="1158" y="1072.6" width="5.8" height="2.4" rx="1.2" fill="#7C7A8C"/>
<!-- mcafee -->
<path d="M1194.6 1048.4 L1204.8 1044.6 L1215 1048.4 V1059.4 Q1215 1063.8 1204.8 1067.4 Q1194.6 1063.8 1194.6 1059.4 Z" fill="#C8102E"/>
<path d="M1198.4 1051.6 L1204.8 1055.6 L1211.2 1051.6 V1059 Q1211.2 1061.8 1204.8 1064 Q1198.4 1061.8 1198.4 1059 Z" fill="#E6E2F0"/>
<!-- calculator -->
<rect x="1240.2" y="1044.5" width="17.7" height="22.9" rx="1.6" fill="#5E6A78"/>
<rect x="1241.6" y="1046" width="14.9" height="4.6" fill="#7DD0F5"/>
<g fill="#D8DEE6"><rect x="1241.8" y="1052.4" width="3.8" height="3.4"/><rect x="1246.8" y="1052.4" width="3.8" height="3.4"/><rect x="1251.8" y="1052.4" width="3.8" height="3.4"/>
<rect x="1241.8" y="1057.2" width="3.8" height="3.4"/><rect x="1246.8" y="1057.2" width="3.8" height="3.4"/>
<rect x="1241.8" y="1062" width="3.8" height="3.4"/><rect x="1246.8" y="1062" width="3.8" height="3.4"/></g>
<rect x="1251.8" y="1057.2" width="3.8" height="8.2" fill="#1F4F96"/>
<!-- project -->
<rect x="1287" y="1045" width="10" height="7.4" fill="#33B377"/><rect x="1291" y="1052.4" width="9.6" height="7" fill="#1E8A4E"/><rect x="1294.8" y="1059.4" width="10" height="6.9" fill="#0E6B38"/>
<rect x="1280.8" y="1049.8" width="12.6" height="12.6" rx="1.4" fill="#107C41"/>
<text x="1283.4" y="1060" font-family="Liberation Sans" font-weight="bold" font-size="10" fill="#fff">P</text>
</svg>
<div class="a" style="left:1317.9px;top:1037.2px;width:37.9px;height:38.5px;border-radius:5px;background:#F6F3F5;border:1px solid #ECE6EC"></div>
<svg style="left:0;top:0" width="1" height="1">
<circle cx="1338.2" cy="1056" r="11" fill="url(#pptg)"/>
<path d="M1338.2 1045 A11 11 0 0 1 1349.2 1056 H1338.2 Z" fill="#F6A07A"/>
<rect x="1324.6" y="1049.6" width="12.4" height="12.6" rx="1.4" fill="#C43E1C"/>
<text x="1327" y="1059.8" font-family="Liberation Sans" font-weight="bold" font-size="10" fill="#fff">P</text>
<rect x="1329.2" y="1072.6" width="15.8" height="2.8" rx="1.4" fill="#2F7C9A"/>
<!-- tray -->
<path d="M1728.8 1058.4 L1734 1053 L1739.2 1058.4" fill="none" stroke="#1E1E1E" stroke-width="1.2"/>
<g fill="none" stroke="#1E1E1E" stroke-width="1.1">
<path d="M1758 1053.8 Q1766 1046.4 1774.2 1053.8"/><path d="M1760.8 1056.4 Q1766 1051.6 1771.4 1056.4"/><path d="M1763.6 1059 Q1766 1056.8 1768.6 1059"/>
<path d="M1782 1052.6 H1785.4 L1789.6 1049.2 V1062.4 L1785.4 1059 H1782 Z"/><path d="M1792 1053 Q1793.6 1055.8 1792 1058.6"/><path d="M1794.4 1051 Q1797 1055.8 1794.4 1060.6"/>
<rect x="1806.6" y="1051.6" width="13.6" height="8.8" rx="1.2"/>
</g>
<circle cx="1766.1" cy="1060.2" r="1.2" fill="#1E1E1E"/>
<rect x="1808.6" y="1053.6" width="9.6" height="4.8" fill="#1E1E1E"/><rect x="1820.6" y="1054" width="1.8" height="4" fill="#1E1E1E"/>
<path d="M1810 1049 L1808.2 1052.4 H1810.4 L1809.4 1055" fill="none" stroke="#1E1E1E" stroke-width="1"/>
</svg>
<div class="t" style="left:645.5px;top:1050.4px;font-size:13px;color:#5A5A5A;transform:scaleX(1.0);transform-origin:0 0">Search</div>
<div class="t" style="left:49.4px;top:1043.7px;font-size:11.2px;color:#1E1E1E;transform:scaleX(0.995);transform-origin:0 0">FTSE banks</div>
<div class="t" style="left:50px;top:1059px;font-size:11.2px;color:#2E9A3A;transform:scaleX(0.95);transform-origin:0 0">+1.21%</div>
<div class="t" style="left:1801px;width:101px;text-align:right;top:1043px;font-size:11.6px;color:#1E1E1E">15:58</div>
<div class="t" style="left:1801.5px;width:101px;text-align:right;top:1058.6px;font-size:12.4px;color:#1E1E1E">20/08/2025</div>

</body></html>
